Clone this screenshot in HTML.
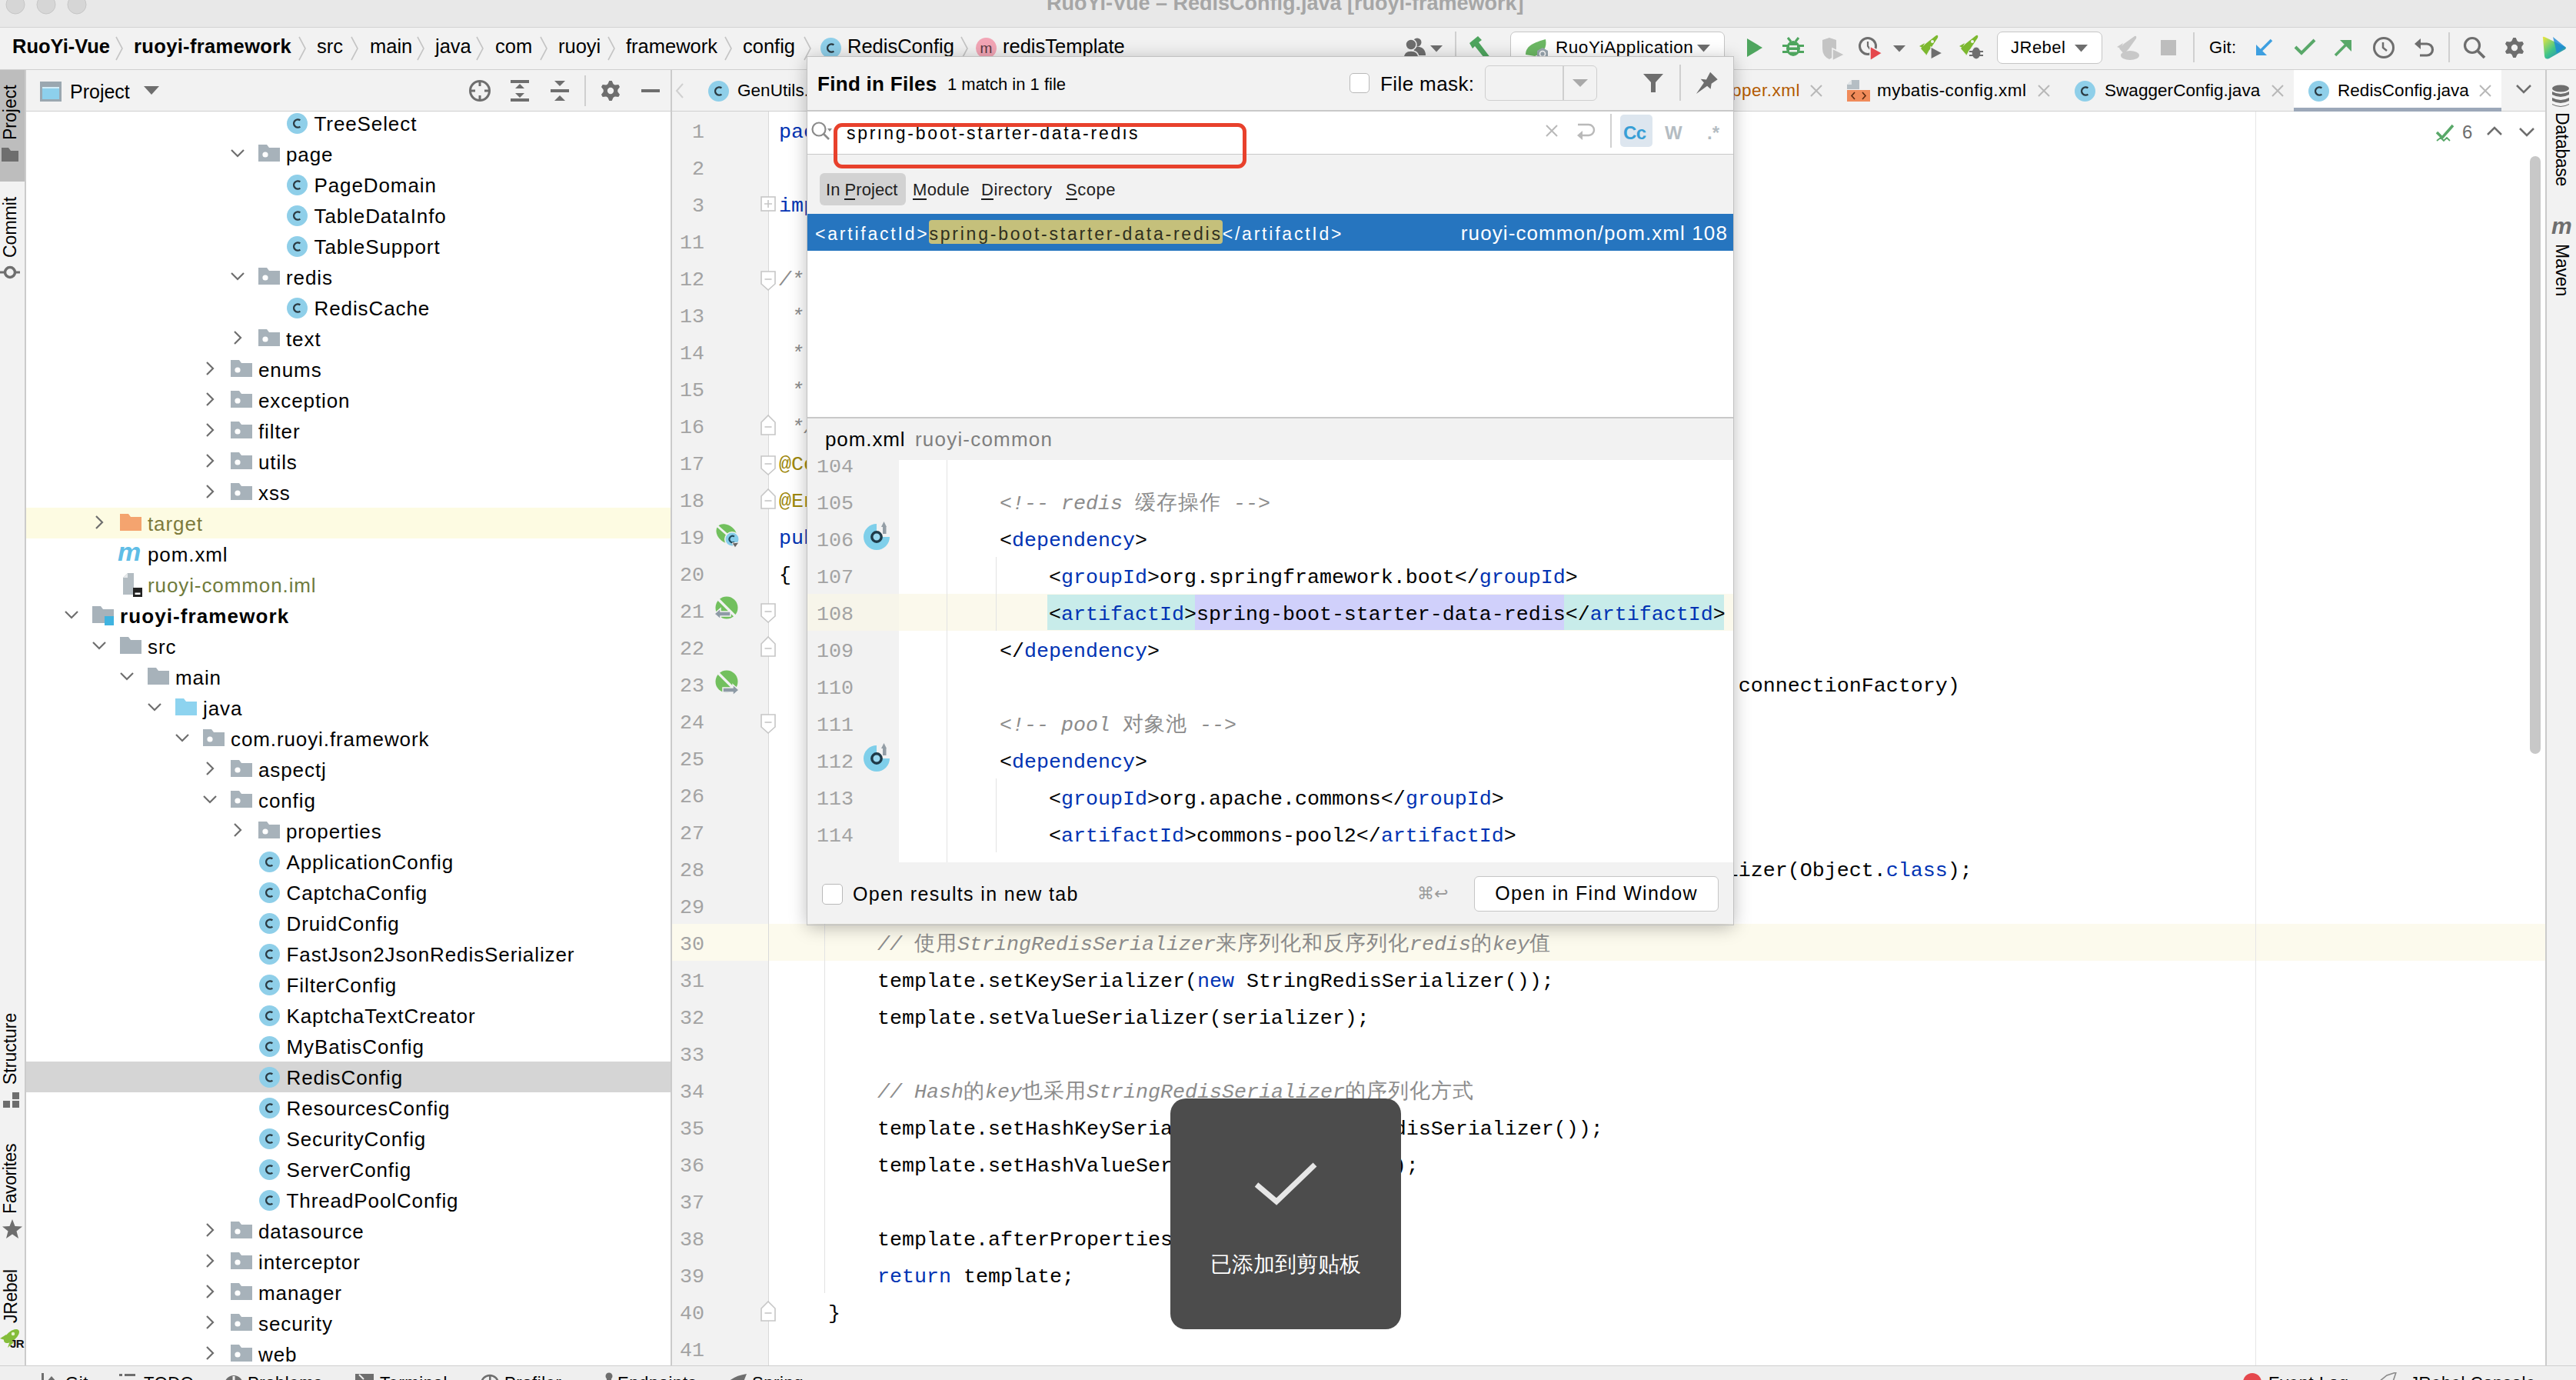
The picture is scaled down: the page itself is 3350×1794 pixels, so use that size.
<!DOCTYPE html><html><head><meta charset="utf-8"><style>html,body{margin:0;padding:0;}body{width:3350px;height:1794px;overflow:hidden;position:relative;background:#f2f2f2;font-family:'Liberation Sans',sans-serif;}</style></head><body>
<div style="position:absolute;left:0px;top:0px;width:3350px;height:35px;background:#e8e8e8;"></div>
<div style="position:absolute;left:0px;top:35px;width:3350px;height:1px;background:#d3d3d3;"></div>
<svg style="position:absolute;left:7px;top:-7px;" width="26" height="26" viewBox="0 0 26 26"><circle cx="13" cy="13" r="12" fill="#d6d6d6" stroke="#c6c6c6" stroke-width="1"/></svg>
<svg style="position:absolute;left:47px;top:-7px;" width="26" height="26" viewBox="0 0 26 26"><circle cx="13" cy="13" r="12" fill="#d6d6d6" stroke="#c6c6c6" stroke-width="1"/></svg>
<svg style="position:absolute;left:87px;top:-7px;" width="26" height="26" viewBox="0 0 26 26"><circle cx="13" cy="13" r="12" fill="#d6d6d6" stroke="#c6c6c6" stroke-width="1"/></svg>
<div style="position:absolute;left:1361.0px;top:-9.3px;font:normal bold 27px/27px 'Liberation Sans',sans-serif;color:#a6a6a6;white-space:pre;letter-spacing:0px;">RuoYi-Vue – RedisConfig.java [ruoyi-framework]</div>
<div style="position:absolute;left:0px;top:36px;width:3350px;height:54px;background:#f2f2f2;"></div>
<div style="position:absolute;left:0px;top:90px;width:3350px;height:1px;background:#d0d0d0;"></div>
<div style="position:absolute;left:16.0px;top:48.4px;font:normal bold 25.5px/25.5px 'Liberation Sans',sans-serif;color:#000;white-space:pre;letter-spacing:0px;">RuoYi-Vue</div>
<svg style="position:absolute;left:149px;top:47px;" width="12" height="32" viewBox="0 0 12 32"><path d="M2 1 L10 16 L2 31" fill="none" stroke="#c4c4c4" stroke-width="1.6"/></svg>
<div style="position:absolute;left:174.0px;top:48.4px;font:normal bold 25.5px/25.5px 'Liberation Sans',sans-serif;color:#000;white-space:pre;letter-spacing:0.35px;">ruoyi-framework</div>
<svg style="position:absolute;left:387px;top:47px;" width="12" height="32" viewBox="0 0 12 32"><path d="M2 1 L10 16 L2 31" fill="none" stroke="#c4c4c4" stroke-width="1.6"/></svg>
<div style="position:absolute;left:412.0px;top:48.4px;font:normal normal 25.5px/25.5px 'Liberation Sans',sans-serif;color:#000;white-space:pre;letter-spacing:0px;">src</div>
<svg style="position:absolute;left:454.6px;top:47px;" width="12" height="32" viewBox="0 0 12 32"><path d="M2 1 L10 16 L2 31" fill="none" stroke="#c4c4c4" stroke-width="1.6"/></svg>
<div style="position:absolute;left:481.0px;top:48.4px;font:normal normal 25.5px/25.5px 'Liberation Sans',sans-serif;color:#000;white-space:pre;letter-spacing:0px;">main</div>
<svg style="position:absolute;left:540.7px;top:47px;" width="12" height="32" viewBox="0 0 12 32"><path d="M2 1 L10 16 L2 31" fill="none" stroke="#c4c4c4" stroke-width="1.6"/></svg>
<div style="position:absolute;left:566.0px;top:48.4px;font:normal normal 25.5px/25.5px 'Liberation Sans',sans-serif;color:#000;white-space:pre;letter-spacing:0px;">java</div>
<svg style="position:absolute;left:618px;top:47px;" width="12" height="32" viewBox="0 0 12 32"><path d="M2 1 L10 16 L2 31" fill="none" stroke="#c4c4c4" stroke-width="1.6"/></svg>
<div style="position:absolute;left:644.0px;top:48.4px;font:normal normal 25.5px/25.5px 'Liberation Sans',sans-serif;color:#000;white-space:pre;letter-spacing:0px;">com</div>
<svg style="position:absolute;left:701px;top:47px;" width="12" height="32" viewBox="0 0 12 32"><path d="M2 1 L10 16 L2 31" fill="none" stroke="#c4c4c4" stroke-width="1.6"/></svg>
<div style="position:absolute;left:726.0px;top:48.4px;font:normal normal 25.5px/25.5px 'Liberation Sans',sans-serif;color:#000;white-space:pre;letter-spacing:0px;">ruoyi</div>
<svg style="position:absolute;left:789px;top:47px;" width="12" height="32" viewBox="0 0 12 32"><path d="M2 1 L10 16 L2 31" fill="none" stroke="#c4c4c4" stroke-width="1.6"/></svg>
<div style="position:absolute;left:814.0px;top:48.4px;font:normal normal 25.5px/25.5px 'Liberation Sans',sans-serif;color:#000;white-space:pre;letter-spacing:0px;">framework</div>
<svg style="position:absolute;left:941px;top:47px;" width="12" height="32" viewBox="0 0 12 32"><path d="M2 1 L10 16 L2 31" fill="none" stroke="#c4c4c4" stroke-width="1.6"/></svg>
<div style="position:absolute;left:966.0px;top:48.4px;font:normal normal 25.5px/25.5px 'Liberation Sans',sans-serif;color:#000;white-space:pre;letter-spacing:0px;">config</div>
<svg style="position:absolute;left:1044px;top:47px;" width="12" height="32" viewBox="0 0 12 32"><path d="M2 1 L10 16 L2 31" fill="none" stroke="#c4c4c4" stroke-width="1.6"/></svg>
<svg style="position:absolute;left:1065.5px;top:47.5px;" width="29.0" height="29.0" viewBox="0 0 29.0 29.0"><circle cx="14.5" cy="14.5" r="13.5" fill="#8fcfe9"/><path d="M 18.35 10.40 A 5.13 5.13 0 1 0 18.35 18.60" fill="none" stroke="#2b3a42" stroke-width="2.4" stroke-linecap="butt"/></svg>
<div style="position:absolute;left:1102.0px;top:48.4px;font:normal normal 25.5px/25.5px 'Liberation Sans',sans-serif;color:#000;white-space:pre;letter-spacing:0px;">RedisConfig</div>
<svg style="position:absolute;left:1248px;top:47px;" width="12" height="32" viewBox="0 0 12 32"><path d="M2 1 L10 16 L2 31" fill="none" stroke="#c4c4c4" stroke-width="1.6"/></svg>
<svg style="position:absolute;left:1267.5px;top:47.5px;" width="29.0" height="29.0" viewBox="0 0 29.0 29.0"><circle cx="14.5" cy="14.5" r="13.5" fill="#f2a5b5"/><text x="14.5" y="20.5" text-anchor="middle" font-family="Liberation Sans" font-size="19" fill="#5a3a44">m</text></svg>
<div style="position:absolute;left:1304.0px;top:48.4px;font:normal normal 25.5px/25.5px 'Liberation Sans',sans-serif;color:#000;white-space:pre;letter-spacing:0px;">redisTemplate</div>
<div style="position:absolute;left:0px;top:91px;width:32px;height:1684px;background:#f2f2f2;"></div>
<div style="position:absolute;left:32px;top:91px;width:2px;height:1684px;background:#cbcbcb;"></div>
<div style="position:absolute;left:0px;top:91px;width:32px;height:145px;background:#bdbdbd;"></div>
<div style="position:absolute;left:34px;top:91px;width:838px;height:54px;background:#f2f2f2;"></div>
<div style="position:absolute;left:34px;top:144px;width:838px;height:1px;background:#d0d0d0;"></div>
<div style="position:absolute;left:34px;top:145px;width:838px;height:1630px;background:#ffffff;"></div>
<div style="position:absolute;left:872px;top:91px;width:2px;height:1684px;background:#cbcbcb;"></div>
<svg style="position:absolute;left:52px;top:106px;" width="28" height="26" viewBox="0 0 28 26"><rect x="0" y="0" width="28" height="26" fill="#9aa7b0"/><rect x="3" y="7" width="22" height="16" fill="#8dd0ec"/><rect x="3" y="7" width="22" height="2" fill="#fff" opacity="0.6"/></svg>
<div style="position:absolute;left:91.0px;top:106.8px;font:normal normal 25px/25px 'Liberation Sans',sans-serif;color:#000;white-space:pre;letter-spacing:0px;">Project</div>
<svg style="position:absolute;left:187px;top:112px;" width="20" height="12" viewBox="0 0 20 12"><path d="M0 0 H20 L10 11 Z" fill="#6e6e6e"/></svg>
<svg style="position:absolute;left:608px;top:102px;" width="32" height="32" viewBox="0 0 32 32"><circle cx="16" cy="16" r="12.5" fill="none" stroke="#6e6e6e" stroke-width="3"/><rect x="14.5" y="5" width="3" height="5" fill="#6e6e6e"/><rect x="14.5" y="22" width="3" height="5" fill="#6e6e6e"/><rect x="5" y="14.5" width="5" height="3" fill="#6e6e6e"/><rect x="22" y="14.5" width="5" height="3" fill="#6e6e6e"/></svg>
<svg style="position:absolute;left:664px;top:102px;" width="25" height="32" viewBox="0 0 25 32"><rect x="0" y="2" width="24" height="4" fill="#6e6e6e"/><rect x="0" y="26" width="24" height="4" fill="#6e6e6e"/><path d="M6 13 L12 7 L18 13 Z" fill="#6e6e6e"/><path d="M6 19 L12 25 L18 19 Z" fill="#6e6e6e"/></svg>
<svg style="position:absolute;left:716px;top:102px;" width="25" height="32" viewBox="0 0 25 32"><rect x="0" y="14" width="24" height="4" fill="#6e6e6e"/><path d="M5 3 L12 10 L19 3 Z" fill="#6e6e6e"/><path d="M5 29 L12 22 L19 29 Z" fill="#6e6e6e"/></svg>
<div style="position:absolute;left:760px;top:98px;width:2px;height:40px;background:#cfcfcf;"></div>
<svg style="position:absolute;left:780px;top:104px;" width="28" height="28" viewBox="0 0 28 28"><polygon points="12.30,1.11 15.70,1.11 17.58,5.35 19.70,6.57 24.31,6.09 26.01,9.03 23.28,12.78 23.28,15.22 26.01,18.97 24.31,21.91 19.70,21.43 17.58,22.65 15.70,26.89 12.30,26.89 10.42,22.65 8.30,21.43 3.69,21.91 1.99,18.97 4.72,15.22 4.72,12.78 1.99,9.03 3.69,6.09 8.30,6.57 10.42,5.35" fill="#6e6e6e"/><circle cx="14" cy="14" r="8.06" fill="#6e6e6e"/><circle cx="14" cy="14" r="4.16" fill="#f2f2f2"/></svg>
<div style="position:absolute;left:834px;top:116px;width:24px;height:4px;background:#6e6e6e;"></div>
<div style="position:absolute;left:34px;top:145px;width:838px;height:1630px;overflow:hidden;"><div style="position:absolute;left:-34px;top:-145px;width:3350px;height:1794px;">
<svg style="position:absolute;left:371.5px;top:145.5px;" width="29.0" height="29.0" viewBox="0 0 29.0 29.0"><circle cx="14.5" cy="14.5" r="13.5" fill="#8fcfe9"/><path d="M 18.35 10.40 A 5.13 5.13 0 1 0 18.35 18.60" fill="none" stroke="#2b3a42" stroke-width="2.4" stroke-linecap="butt"/></svg>
<div style="position:absolute;left:408.5px;top:148.0px;font:normal normal 26px/26px 'Liberation Sans',sans-serif;color:#000;white-space:pre;letter-spacing:0.9px;">TreeSelect</div>
<svg style="position:absolute;left:299px;top:191px;" width="20" height="16" viewBox="0 0 20 16"><path d="M2 4 L10 12 L18 4" fill="none" stroke="#6e6e6e" stroke-width="2.2"/></svg>
<svg style="position:absolute;left:336px;top:188px;" width="30" height="26" viewBox="0 0 30 26"><path d="M0 0 H11 L14 4 H28 V22 H0 Z" fill="#a7b2ba"/><circle cx="9" cy="13" r="3.6" fill="#fff"/></svg>
<div style="position:absolute;left:372.0px;top:188.0px;font:normal normal 26px/26px 'Liberation Sans',sans-serif;color:#000;white-space:pre;letter-spacing:0.9px;">page</div>
<svg style="position:absolute;left:371.5px;top:225.5px;" width="29.0" height="29.0" viewBox="0 0 29.0 29.0"><circle cx="14.5" cy="14.5" r="13.5" fill="#8fcfe9"/><path d="M 18.35 10.40 A 5.13 5.13 0 1 0 18.35 18.60" fill="none" stroke="#2b3a42" stroke-width="2.4" stroke-linecap="butt"/></svg>
<div style="position:absolute;left:408.5px;top:228.0px;font:normal normal 26px/26px 'Liberation Sans',sans-serif;color:#000;white-space:pre;letter-spacing:0.9px;">PageDomain</div>
<svg style="position:absolute;left:371.5px;top:265.5px;" width="29.0" height="29.0" viewBox="0 0 29.0 29.0"><circle cx="14.5" cy="14.5" r="13.5" fill="#8fcfe9"/><path d="M 18.35 10.40 A 5.13 5.13 0 1 0 18.35 18.60" fill="none" stroke="#2b3a42" stroke-width="2.4" stroke-linecap="butt"/></svg>
<div style="position:absolute;left:408.5px;top:268.0px;font:normal normal 26px/26px 'Liberation Sans',sans-serif;color:#000;white-space:pre;letter-spacing:0.9px;">TableDataInfo</div>
<svg style="position:absolute;left:371.5px;top:305.5px;" width="29.0" height="29.0" viewBox="0 0 29.0 29.0"><circle cx="14.5" cy="14.5" r="13.5" fill="#8fcfe9"/><path d="M 18.35 10.40 A 5.13 5.13 0 1 0 18.35 18.60" fill="none" stroke="#2b3a42" stroke-width="2.4" stroke-linecap="butt"/></svg>
<div style="position:absolute;left:408.5px;top:308.0px;font:normal normal 26px/26px 'Liberation Sans',sans-serif;color:#000;white-space:pre;letter-spacing:0.9px;">TableSupport</div>
<svg style="position:absolute;left:299px;top:351px;" width="20" height="16" viewBox="0 0 20 16"><path d="M2 4 L10 12 L18 4" fill="none" stroke="#6e6e6e" stroke-width="2.2"/></svg>
<svg style="position:absolute;left:336px;top:348px;" width="30" height="26" viewBox="0 0 30 26"><path d="M0 0 H11 L14 4 H28 V22 H0 Z" fill="#a7b2ba"/><circle cx="9" cy="13" r="3.6" fill="#fff"/></svg>
<div style="position:absolute;left:372.0px;top:348.0px;font:normal normal 26px/26px 'Liberation Sans',sans-serif;color:#000;white-space:pre;letter-spacing:0.9px;">redis</div>
<svg style="position:absolute;left:371.5px;top:385.5px;" width="29.0" height="29.0" viewBox="0 0 29.0 29.0"><circle cx="14.5" cy="14.5" r="13.5" fill="#8fcfe9"/><path d="M 18.35 10.40 A 5.13 5.13 0 1 0 18.35 18.60" fill="none" stroke="#2b3a42" stroke-width="2.4" stroke-linecap="butt"/></svg>
<div style="position:absolute;left:408.5px;top:388.0px;font:normal normal 26px/26px 'Liberation Sans',sans-serif;color:#000;white-space:pre;letter-spacing:0.9px;">RedisCache</div>
<svg style="position:absolute;left:301px;top:429px;" width="16" height="20" viewBox="0 0 16 20"><path d="M4 2 L12 10 L4 18" fill="none" stroke="#6e6e6e" stroke-width="2.2"/></svg>
<svg style="position:absolute;left:336px;top:428px;" width="30" height="26" viewBox="0 0 30 26"><path d="M0 0 H11 L14 4 H28 V22 H0 Z" fill="#a7b2ba"/><circle cx="9" cy="13" r="3.6" fill="#fff"/></svg>
<div style="position:absolute;left:372.0px;top:428.0px;font:normal normal 26px/26px 'Liberation Sans',sans-serif;color:#000;white-space:pre;letter-spacing:0.9px;">text</div>
<svg style="position:absolute;left:265px;top:469px;" width="16" height="20" viewBox="0 0 16 20"><path d="M4 2 L12 10 L4 18" fill="none" stroke="#6e6e6e" stroke-width="2.2"/></svg>
<svg style="position:absolute;left:300px;top:468px;" width="30" height="26" viewBox="0 0 30 26"><path d="M0 0 H11 L14 4 H28 V22 H0 Z" fill="#a7b2ba"/><circle cx="9" cy="13" r="3.6" fill="#fff"/></svg>
<div style="position:absolute;left:336.0px;top:468.0px;font:normal normal 26px/26px 'Liberation Sans',sans-serif;color:#000;white-space:pre;letter-spacing:0.9px;">enums</div>
<svg style="position:absolute;left:265px;top:509px;" width="16" height="20" viewBox="0 0 16 20"><path d="M4 2 L12 10 L4 18" fill="none" stroke="#6e6e6e" stroke-width="2.2"/></svg>
<svg style="position:absolute;left:300px;top:508px;" width="30" height="26" viewBox="0 0 30 26"><path d="M0 0 H11 L14 4 H28 V22 H0 Z" fill="#a7b2ba"/><circle cx="9" cy="13" r="3.6" fill="#fff"/></svg>
<div style="position:absolute;left:336.0px;top:508.0px;font:normal normal 26px/26px 'Liberation Sans',sans-serif;color:#000;white-space:pre;letter-spacing:0.9px;">exception</div>
<svg style="position:absolute;left:265px;top:549px;" width="16" height="20" viewBox="0 0 16 20"><path d="M4 2 L12 10 L4 18" fill="none" stroke="#6e6e6e" stroke-width="2.2"/></svg>
<svg style="position:absolute;left:300px;top:548px;" width="30" height="26" viewBox="0 0 30 26"><path d="M0 0 H11 L14 4 H28 V22 H0 Z" fill="#a7b2ba"/><circle cx="9" cy="13" r="3.6" fill="#fff"/></svg>
<div style="position:absolute;left:336.0px;top:548.0px;font:normal normal 26px/26px 'Liberation Sans',sans-serif;color:#000;white-space:pre;letter-spacing:0.9px;">filter</div>
<svg style="position:absolute;left:265px;top:589px;" width="16" height="20" viewBox="0 0 16 20"><path d="M4 2 L12 10 L4 18" fill="none" stroke="#6e6e6e" stroke-width="2.2"/></svg>
<svg style="position:absolute;left:300px;top:588px;" width="30" height="26" viewBox="0 0 30 26"><path d="M0 0 H11 L14 4 H28 V22 H0 Z" fill="#a7b2ba"/><circle cx="9" cy="13" r="3.6" fill="#fff"/></svg>
<div style="position:absolute;left:336.0px;top:588.0px;font:normal normal 26px/26px 'Liberation Sans',sans-serif;color:#000;white-space:pre;letter-spacing:0.9px;">utils</div>
<svg style="position:absolute;left:265px;top:629px;" width="16" height="20" viewBox="0 0 16 20"><path d="M4 2 L12 10 L4 18" fill="none" stroke="#6e6e6e" stroke-width="2.2"/></svg>
<svg style="position:absolute;left:300px;top:628px;" width="30" height="26" viewBox="0 0 30 26"><path d="M0 0 H11 L14 4 H28 V22 H0 Z" fill="#a7b2ba"/><circle cx="9" cy="13" r="3.6" fill="#fff"/></svg>
<div style="position:absolute;left:336.0px;top:628.0px;font:normal normal 26px/26px 'Liberation Sans',sans-serif;color:#000;white-space:pre;letter-spacing:0.9px;">xss</div>
<div style="position:absolute;left:34px;top:660px;width:838px;height:40px;background:#fdfbe2;"></div>
<svg style="position:absolute;left:121px;top:669px;" width="16" height="20" viewBox="0 0 16 20"><path d="M4 2 L12 10 L4 18" fill="none" stroke="#6e6e6e" stroke-width="2.2"/></svg>
<svg style="position:absolute;left:156px;top:668px;" width="30" height="26" viewBox="0 0 30 26"><path d="M0 0 H11 L14 4 H28 V22 H0 Z" fill="#f4a46f"/></svg>
<div style="position:absolute;left:192.0px;top:668.0px;font:normal normal 26px/26px 'Liberation Sans',sans-serif;color:#7d7a3c;white-space:pre;letter-spacing:0.9px;">target</div>
<div style="position:absolute;left:153.0px;top:700.2px;font:italic bold 34px/34px 'Liberation Sans',sans-serif;color:#5fbde6;white-space:pre;letter-spacing:-1px;">m</div>
<div style="position:absolute;left:192.0px;top:708.0px;font:normal normal 26px/26px 'Liberation Sans',sans-serif;color:#000;white-space:pre;letter-spacing:0.9px;">pom.xml</div>
<svg style="position:absolute;left:160px;top:745px;" width="26" height="32" viewBox="0 0 26 32"><path d="M0 6 L6 0 H14 V28 H0 Z" fill="#b3bcc2"/><path d="M0 6 H6 V0 Z" fill="#e6e9eb"/><rect x="13" y="19" width="12" height="12" fill="#222"/><rect x="15.5" y="25.5" width="7" height="2.5" fill="#fff"/></svg>
<div style="position:absolute;left:192.0px;top:748.0px;font:normal normal 26px/26px 'Liberation Sans',sans-serif;color:#6f7b3c;white-space:pre;letter-spacing:0.9px;">ruoyi-common.iml</div>
<svg style="position:absolute;left:83px;top:791px;" width="20" height="16" viewBox="0 0 20 16"><path d="M2 4 L10 12 L18 4" fill="none" stroke="#6e6e6e" stroke-width="2.2"/></svg>
<svg style="position:absolute;left:120px;top:788px;" width="30" height="26" viewBox="0 0 30 26"><path d="M0 0 H11 L14 4 H28 V22 H0 Z" fill="#a7b2ba"/><rect x="16" y="13" width="12" height="12" fill="#3fb3e0"/></svg>
<div style="position:absolute;left:156.0px;top:788.0px;font:normal bold 26px/26px 'Liberation Sans',sans-serif;color:#000;white-space:pre;letter-spacing:1.1px;">ruoyi-framework</div>
<svg style="position:absolute;left:119px;top:831px;" width="20" height="16" viewBox="0 0 20 16"><path d="M2 4 L10 12 L18 4" fill="none" stroke="#6e6e6e" stroke-width="2.2"/></svg>
<svg style="position:absolute;left:156px;top:828px;" width="30" height="26" viewBox="0 0 30 26"><path d="M0 0 H11 L14 4 H28 V22 H0 Z" fill="#a7b2ba"/></svg>
<div style="position:absolute;left:192.0px;top:828.0px;font:normal normal 26px/26px 'Liberation Sans',sans-serif;color:#000;white-space:pre;letter-spacing:0.9px;">src</div>
<svg style="position:absolute;left:155px;top:871px;" width="20" height="16" viewBox="0 0 20 16"><path d="M2 4 L10 12 L18 4" fill="none" stroke="#6e6e6e" stroke-width="2.2"/></svg>
<svg style="position:absolute;left:192px;top:868px;" width="30" height="26" viewBox="0 0 30 26"><path d="M0 0 H11 L14 4 H28 V22 H0 Z" fill="#a7b2ba"/></svg>
<div style="position:absolute;left:228.0px;top:868.0px;font:normal normal 26px/26px 'Liberation Sans',sans-serif;color:#000;white-space:pre;letter-spacing:0.9px;">main</div>
<svg style="position:absolute;left:191px;top:911px;" width="20" height="16" viewBox="0 0 20 16"><path d="M2 4 L10 12 L18 4" fill="none" stroke="#6e6e6e" stroke-width="2.2"/></svg>
<svg style="position:absolute;left:228px;top:908px;" width="30" height="26" viewBox="0 0 30 26"><path d="M0 0 H11 L14 4 H28 V22 H0 Z" fill="#8dd3ef"/></svg>
<div style="position:absolute;left:264.0px;top:908.0px;font:normal normal 26px/26px 'Liberation Sans',sans-serif;color:#000;white-space:pre;letter-spacing:0.9px;">java</div>
<svg style="position:absolute;left:227px;top:951px;" width="20" height="16" viewBox="0 0 20 16"><path d="M2 4 L10 12 L18 4" fill="none" stroke="#6e6e6e" stroke-width="2.2"/></svg>
<svg style="position:absolute;left:264px;top:948px;" width="30" height="26" viewBox="0 0 30 26"><path d="M0 0 H11 L14 4 H28 V22 H0 Z" fill="#a7b2ba"/><circle cx="9" cy="13" r="3.6" fill="#fff"/></svg>
<div style="position:absolute;left:300.0px;top:948.0px;font:normal normal 26px/26px 'Liberation Sans',sans-serif;color:#000;white-space:pre;letter-spacing:0.9px;">com.ruoyi.framework</div>
<svg style="position:absolute;left:265px;top:989px;" width="16" height="20" viewBox="0 0 16 20"><path d="M4 2 L12 10 L4 18" fill="none" stroke="#6e6e6e" stroke-width="2.2"/></svg>
<svg style="position:absolute;left:300px;top:988px;" width="30" height="26" viewBox="0 0 30 26"><path d="M0 0 H11 L14 4 H28 V22 H0 Z" fill="#a7b2ba"/><circle cx="9" cy="13" r="3.6" fill="#fff"/></svg>
<div style="position:absolute;left:336.0px;top:988.0px;font:normal normal 26px/26px 'Liberation Sans',sans-serif;color:#000;white-space:pre;letter-spacing:0.9px;">aspectj</div>
<svg style="position:absolute;left:263px;top:1031px;" width="20" height="16" viewBox="0 0 20 16"><path d="M2 4 L10 12 L18 4" fill="none" stroke="#6e6e6e" stroke-width="2.2"/></svg>
<svg style="position:absolute;left:300px;top:1028px;" width="30" height="26" viewBox="0 0 30 26"><path d="M0 0 H11 L14 4 H28 V22 H0 Z" fill="#a7b2ba"/><circle cx="9" cy="13" r="3.6" fill="#fff"/></svg>
<div style="position:absolute;left:336.0px;top:1028.0px;font:normal normal 26px/26px 'Liberation Sans',sans-serif;color:#000;white-space:pre;letter-spacing:0.9px;">config</div>
<svg style="position:absolute;left:301px;top:1069px;" width="16" height="20" viewBox="0 0 16 20"><path d="M4 2 L12 10 L4 18" fill="none" stroke="#6e6e6e" stroke-width="2.2"/></svg>
<svg style="position:absolute;left:336px;top:1068px;" width="30" height="26" viewBox="0 0 30 26"><path d="M0 0 H11 L14 4 H28 V22 H0 Z" fill="#a7b2ba"/><circle cx="9" cy="13" r="3.6" fill="#fff"/></svg>
<div style="position:absolute;left:372.0px;top:1068.0px;font:normal normal 26px/26px 'Liberation Sans',sans-serif;color:#000;white-space:pre;letter-spacing:0.9px;">properties</div>
<svg style="position:absolute;left:335.5px;top:1105.5px;" width="29.0" height="29.0" viewBox="0 0 29.0 29.0"><circle cx="14.5" cy="14.5" r="13.5" fill="#8fcfe9"/><path d="M 18.35 10.40 A 5.13 5.13 0 1 0 18.35 18.60" fill="none" stroke="#2b3a42" stroke-width="2.4" stroke-linecap="butt"/></svg>
<div style="position:absolute;left:372.5px;top:1108.0px;font:normal normal 26px/26px 'Liberation Sans',sans-serif;color:#000;white-space:pre;letter-spacing:0.9px;">ApplicationConfig</div>
<svg style="position:absolute;left:335.5px;top:1145.5px;" width="29.0" height="29.0" viewBox="0 0 29.0 29.0"><circle cx="14.5" cy="14.5" r="13.5" fill="#8fcfe9"/><path d="M 18.35 10.40 A 5.13 5.13 0 1 0 18.35 18.60" fill="none" stroke="#2b3a42" stroke-width="2.4" stroke-linecap="butt"/></svg>
<div style="position:absolute;left:372.5px;top:1148.0px;font:normal normal 26px/26px 'Liberation Sans',sans-serif;color:#000;white-space:pre;letter-spacing:0.9px;">CaptchaConfig</div>
<svg style="position:absolute;left:335.5px;top:1185.5px;" width="29.0" height="29.0" viewBox="0 0 29.0 29.0"><circle cx="14.5" cy="14.5" r="13.5" fill="#8fcfe9"/><path d="M 18.35 10.40 A 5.13 5.13 0 1 0 18.35 18.60" fill="none" stroke="#2b3a42" stroke-width="2.4" stroke-linecap="butt"/></svg>
<div style="position:absolute;left:372.5px;top:1188.0px;font:normal normal 26px/26px 'Liberation Sans',sans-serif;color:#000;white-space:pre;letter-spacing:0.9px;">DruidConfig</div>
<svg style="position:absolute;left:335.5px;top:1225.5px;" width="29.0" height="29.0" viewBox="0 0 29.0 29.0"><circle cx="14.5" cy="14.5" r="13.5" fill="#8fcfe9"/><path d="M 18.35 10.40 A 5.13 5.13 0 1 0 18.35 18.60" fill="none" stroke="#2b3a42" stroke-width="2.4" stroke-linecap="butt"/></svg>
<div style="position:absolute;left:372.5px;top:1228.0px;font:normal normal 26px/26px 'Liberation Sans',sans-serif;color:#000;white-space:pre;letter-spacing:0.9px;">FastJson2JsonRedisSerializer</div>
<svg style="position:absolute;left:335.5px;top:1265.5px;" width="29.0" height="29.0" viewBox="0 0 29.0 29.0"><circle cx="14.5" cy="14.5" r="13.5" fill="#8fcfe9"/><path d="M 18.35 10.40 A 5.13 5.13 0 1 0 18.35 18.60" fill="none" stroke="#2b3a42" stroke-width="2.4" stroke-linecap="butt"/></svg>
<div style="position:absolute;left:372.5px;top:1268.0px;font:normal normal 26px/26px 'Liberation Sans',sans-serif;color:#000;white-space:pre;letter-spacing:0.9px;">FilterConfig</div>
<svg style="position:absolute;left:335.5px;top:1305.5px;" width="29.0" height="29.0" viewBox="0 0 29.0 29.0"><circle cx="14.5" cy="14.5" r="13.5" fill="#8fcfe9"/><path d="M 18.35 10.40 A 5.13 5.13 0 1 0 18.35 18.60" fill="none" stroke="#2b3a42" stroke-width="2.4" stroke-linecap="butt"/></svg>
<div style="position:absolute;left:372.5px;top:1308.0px;font:normal normal 26px/26px 'Liberation Sans',sans-serif;color:#000;white-space:pre;letter-spacing:0.9px;">KaptchaTextCreator</div>
<svg style="position:absolute;left:335.5px;top:1345.5px;" width="29.0" height="29.0" viewBox="0 0 29.0 29.0"><circle cx="14.5" cy="14.5" r="13.5" fill="#8fcfe9"/><path d="M 18.35 10.40 A 5.13 5.13 0 1 0 18.35 18.60" fill="none" stroke="#2b3a42" stroke-width="2.4" stroke-linecap="butt"/></svg>
<div style="position:absolute;left:372.5px;top:1348.0px;font:normal normal 26px/26px 'Liberation Sans',sans-serif;color:#000;white-space:pre;letter-spacing:0.9px;">MyBatisConfig</div>
<div style="position:absolute;left:34px;top:1380px;width:838px;height:40px;background:#d5d5d5;"></div>
<svg style="position:absolute;left:335.5px;top:1385.5px;" width="29.0" height="29.0" viewBox="0 0 29.0 29.0"><circle cx="14.5" cy="14.5" r="13.5" fill="#8fcfe9"/><path d="M 18.35 10.40 A 5.13 5.13 0 1 0 18.35 18.60" fill="none" stroke="#2b3a42" stroke-width="2.4" stroke-linecap="butt"/></svg>
<div style="position:absolute;left:372.5px;top:1388.0px;font:normal normal 26px/26px 'Liberation Sans',sans-serif;color:#000;white-space:pre;letter-spacing:0.9px;">RedisConfig</div>
<svg style="position:absolute;left:335.5px;top:1425.5px;" width="29.0" height="29.0" viewBox="0 0 29.0 29.0"><circle cx="14.5" cy="14.5" r="13.5" fill="#8fcfe9"/><path d="M 18.35 10.40 A 5.13 5.13 0 1 0 18.35 18.60" fill="none" stroke="#2b3a42" stroke-width="2.4" stroke-linecap="butt"/></svg>
<div style="position:absolute;left:372.5px;top:1428.0px;font:normal normal 26px/26px 'Liberation Sans',sans-serif;color:#000;white-space:pre;letter-spacing:0.9px;">ResourcesConfig</div>
<svg style="position:absolute;left:335.5px;top:1465.5px;" width="29.0" height="29.0" viewBox="0 0 29.0 29.0"><circle cx="14.5" cy="14.5" r="13.5" fill="#8fcfe9"/><path d="M 18.35 10.40 A 5.13 5.13 0 1 0 18.35 18.60" fill="none" stroke="#2b3a42" stroke-width="2.4" stroke-linecap="butt"/></svg>
<div style="position:absolute;left:372.5px;top:1468.0px;font:normal normal 26px/26px 'Liberation Sans',sans-serif;color:#000;white-space:pre;letter-spacing:0.9px;">SecurityConfig</div>
<svg style="position:absolute;left:335.5px;top:1505.5px;" width="29.0" height="29.0" viewBox="0 0 29.0 29.0"><circle cx="14.5" cy="14.5" r="13.5" fill="#8fcfe9"/><path d="M 18.35 10.40 A 5.13 5.13 0 1 0 18.35 18.60" fill="none" stroke="#2b3a42" stroke-width="2.4" stroke-linecap="butt"/></svg>
<div style="position:absolute;left:372.5px;top:1508.0px;font:normal normal 26px/26px 'Liberation Sans',sans-serif;color:#000;white-space:pre;letter-spacing:0.9px;">ServerConfig</div>
<svg style="position:absolute;left:335.5px;top:1545.5px;" width="29.0" height="29.0" viewBox="0 0 29.0 29.0"><circle cx="14.5" cy="14.5" r="13.5" fill="#8fcfe9"/><path d="M 18.35 10.40 A 5.13 5.13 0 1 0 18.35 18.60" fill="none" stroke="#2b3a42" stroke-width="2.4" stroke-linecap="butt"/></svg>
<div style="position:absolute;left:372.5px;top:1548.0px;font:normal normal 26px/26px 'Liberation Sans',sans-serif;color:#000;white-space:pre;letter-spacing:0.9px;">ThreadPoolConfig</div>
<svg style="position:absolute;left:265px;top:1589px;" width="16" height="20" viewBox="0 0 16 20"><path d="M4 2 L12 10 L4 18" fill="none" stroke="#6e6e6e" stroke-width="2.2"/></svg>
<svg style="position:absolute;left:300px;top:1588px;" width="30" height="26" viewBox="0 0 30 26"><path d="M0 0 H11 L14 4 H28 V22 H0 Z" fill="#a7b2ba"/><circle cx="9" cy="13" r="3.6" fill="#fff"/></svg>
<div style="position:absolute;left:336.0px;top:1588.0px;font:normal normal 26px/26px 'Liberation Sans',sans-serif;color:#000;white-space:pre;letter-spacing:0.9px;">datasource</div>
<svg style="position:absolute;left:265px;top:1629px;" width="16" height="20" viewBox="0 0 16 20"><path d="M4 2 L12 10 L4 18" fill="none" stroke="#6e6e6e" stroke-width="2.2"/></svg>
<svg style="position:absolute;left:300px;top:1628px;" width="30" height="26" viewBox="0 0 30 26"><path d="M0 0 H11 L14 4 H28 V22 H0 Z" fill="#a7b2ba"/><circle cx="9" cy="13" r="3.6" fill="#fff"/></svg>
<div style="position:absolute;left:336.0px;top:1628.0px;font:normal normal 26px/26px 'Liberation Sans',sans-serif;color:#000;white-space:pre;letter-spacing:0.9px;">interceptor</div>
<svg style="position:absolute;left:265px;top:1669px;" width="16" height="20" viewBox="0 0 16 20"><path d="M4 2 L12 10 L4 18" fill="none" stroke="#6e6e6e" stroke-width="2.2"/></svg>
<svg style="position:absolute;left:300px;top:1668px;" width="30" height="26" viewBox="0 0 30 26"><path d="M0 0 H11 L14 4 H28 V22 H0 Z" fill="#a7b2ba"/><circle cx="9" cy="13" r="3.6" fill="#fff"/></svg>
<div style="position:absolute;left:336.0px;top:1668.0px;font:normal normal 26px/26px 'Liberation Sans',sans-serif;color:#000;white-space:pre;letter-spacing:0.9px;">manager</div>
<svg style="position:absolute;left:265px;top:1709px;" width="16" height="20" viewBox="0 0 16 20"><path d="M4 2 L12 10 L4 18" fill="none" stroke="#6e6e6e" stroke-width="2.2"/></svg>
<svg style="position:absolute;left:300px;top:1708px;" width="30" height="26" viewBox="0 0 30 26"><path d="M0 0 H11 L14 4 H28 V22 H0 Z" fill="#a7b2ba"/><circle cx="9" cy="13" r="3.6" fill="#fff"/></svg>
<div style="position:absolute;left:336.0px;top:1708.0px;font:normal normal 26px/26px 'Liberation Sans',sans-serif;color:#000;white-space:pre;letter-spacing:0.9px;">security</div>
<svg style="position:absolute;left:265px;top:1749px;" width="16" height="20" viewBox="0 0 16 20"><path d="M4 2 L12 10 L4 18" fill="none" stroke="#6e6e6e" stroke-width="2.2"/></svg>
<svg style="position:absolute;left:300px;top:1748px;" width="30" height="26" viewBox="0 0 30 26"><path d="M0 0 H11 L14 4 H28 V22 H0 Z" fill="#a7b2ba"/><circle cx="9" cy="13" r="3.6" fill="#fff"/></svg>
<div style="position:absolute;left:336.0px;top:1748.0px;font:normal normal 26px/26px 'Liberation Sans',sans-serif;color:#000;white-space:pre;letter-spacing:0.9px;">web</div>
</div></div>
<div style="position:absolute;left:874px;top:91px;width:2436px;height:54px;background:#f2f2f2;"></div>
<div style="position:absolute;left:874px;top:144px;width:2436px;height:1px;background:#d0d0d0;"></div>
<div style="position:absolute;left:874px;top:145px;width:125px;height:1630px;background:#f2f2f2;"></div>
<div style="position:absolute;left:999px;top:145px;width:2311px;height:1630px;background:#ffffff;"></div>
<div style="position:absolute;left:999px;top:145px;width:1px;height:1630px;background:#d6d6d6;"></div>
<div style="position:absolute;left:874px;top:1201px;width:2436px;height:48px;background:#fcfaed;"></div>
<div style="position:absolute;left:2933px;top:145px;width:1px;height:1630px;background:#e6e6e6;"></div>
<div style="position:absolute;left:999px;top:145px;width:1px;height:1630px;background:#d9d9d9;"></div>
<div style="position:absolute;left:840px;width:76px;top:158.9px;font:26.67px/26.67px 'Liberation Mono',monospace;color:#a3a3a3;text-align:right;white-space:pre;">1</div>
<div style="position:absolute;left:840px;width:76px;top:206.9px;font:26.67px/26.67px 'Liberation Mono',monospace;color:#a3a3a3;text-align:right;white-space:pre;">2</div>
<div style="position:absolute;left:840px;width:76px;top:254.9px;font:26.67px/26.67px 'Liberation Mono',monospace;color:#a3a3a3;text-align:right;white-space:pre;">3</div>
<div style="position:absolute;left:840px;width:76px;top:302.9px;font:26.67px/26.67px 'Liberation Mono',monospace;color:#a3a3a3;text-align:right;white-space:pre;">11</div>
<div style="position:absolute;left:840px;width:76px;top:350.9px;font:26.67px/26.67px 'Liberation Mono',monospace;color:#a3a3a3;text-align:right;white-space:pre;">12</div>
<div style="position:absolute;left:840px;width:76px;top:398.9px;font:26.67px/26.67px 'Liberation Mono',monospace;color:#a3a3a3;text-align:right;white-space:pre;">13</div>
<div style="position:absolute;left:840px;width:76px;top:446.9px;font:26.67px/26.67px 'Liberation Mono',monospace;color:#a3a3a3;text-align:right;white-space:pre;">14</div>
<div style="position:absolute;left:840px;width:76px;top:494.9px;font:26.67px/26.67px 'Liberation Mono',monospace;color:#a3a3a3;text-align:right;white-space:pre;">15</div>
<div style="position:absolute;left:840px;width:76px;top:542.9px;font:26.67px/26.67px 'Liberation Mono',monospace;color:#a3a3a3;text-align:right;white-space:pre;">16</div>
<div style="position:absolute;left:840px;width:76px;top:590.9px;font:26.67px/26.67px 'Liberation Mono',monospace;color:#a3a3a3;text-align:right;white-space:pre;">17</div>
<div style="position:absolute;left:840px;width:76px;top:638.9px;font:26.67px/26.67px 'Liberation Mono',monospace;color:#a3a3a3;text-align:right;white-space:pre;">18</div>
<div style="position:absolute;left:840px;width:76px;top:686.9px;font:26.67px/26.67px 'Liberation Mono',monospace;color:#a3a3a3;text-align:right;white-space:pre;">19</div>
<div style="position:absolute;left:840px;width:76px;top:734.9px;font:26.67px/26.67px 'Liberation Mono',monospace;color:#a3a3a3;text-align:right;white-space:pre;">20</div>
<div style="position:absolute;left:840px;width:76px;top:782.9px;font:26.67px/26.67px 'Liberation Mono',monospace;color:#a3a3a3;text-align:right;white-space:pre;">21</div>
<div style="position:absolute;left:840px;width:76px;top:830.9px;font:26.67px/26.67px 'Liberation Mono',monospace;color:#a3a3a3;text-align:right;white-space:pre;">22</div>
<div style="position:absolute;left:840px;width:76px;top:878.9px;font:26.67px/26.67px 'Liberation Mono',monospace;color:#a3a3a3;text-align:right;white-space:pre;">23</div>
<div style="position:absolute;left:840px;width:76px;top:926.9px;font:26.67px/26.67px 'Liberation Mono',monospace;color:#a3a3a3;text-align:right;white-space:pre;">24</div>
<div style="position:absolute;left:840px;width:76px;top:974.9px;font:26.67px/26.67px 'Liberation Mono',monospace;color:#a3a3a3;text-align:right;white-space:pre;">25</div>
<div style="position:absolute;left:840px;width:76px;top:1022.9px;font:26.67px/26.67px 'Liberation Mono',monospace;color:#a3a3a3;text-align:right;white-space:pre;">26</div>
<div style="position:absolute;left:840px;width:76px;top:1070.9px;font:26.67px/26.67px 'Liberation Mono',monospace;color:#a3a3a3;text-align:right;white-space:pre;">27</div>
<div style="position:absolute;left:840px;width:76px;top:1118.9px;font:26.67px/26.67px 'Liberation Mono',monospace;color:#a3a3a3;text-align:right;white-space:pre;">28</div>
<div style="position:absolute;left:840px;width:76px;top:1166.9px;font:26.67px/26.67px 'Liberation Mono',monospace;color:#a3a3a3;text-align:right;white-space:pre;">29</div>
<div style="position:absolute;left:840px;width:76px;top:1214.9px;font:26.67px/26.67px 'Liberation Mono',monospace;color:#a3a3a3;text-align:right;white-space:pre;">30</div>
<div style="position:absolute;left:840px;width:76px;top:1262.9px;font:26.67px/26.67px 'Liberation Mono',monospace;color:#a3a3a3;text-align:right;white-space:pre;">31</div>
<div style="position:absolute;left:840px;width:76px;top:1310.9px;font:26.67px/26.67px 'Liberation Mono',monospace;color:#a3a3a3;text-align:right;white-space:pre;">32</div>
<div style="position:absolute;left:840px;width:76px;top:1358.9px;font:26.67px/26.67px 'Liberation Mono',monospace;color:#a3a3a3;text-align:right;white-space:pre;">33</div>
<div style="position:absolute;left:840px;width:76px;top:1406.9px;font:26.67px/26.67px 'Liberation Mono',monospace;color:#a3a3a3;text-align:right;white-space:pre;">34</div>
<div style="position:absolute;left:840px;width:76px;top:1454.9px;font:26.67px/26.67px 'Liberation Mono',monospace;color:#a3a3a3;text-align:right;white-space:pre;">35</div>
<div style="position:absolute;left:840px;width:76px;top:1502.9px;font:26.67px/26.67px 'Liberation Mono',monospace;color:#a3a3a3;text-align:right;white-space:pre;">36</div>
<div style="position:absolute;left:840px;width:76px;top:1550.9px;font:26.67px/26.67px 'Liberation Mono',monospace;color:#a3a3a3;text-align:right;white-space:pre;">37</div>
<div style="position:absolute;left:840px;width:76px;top:1598.9px;font:26.67px/26.67px 'Liberation Mono',monospace;color:#a3a3a3;text-align:right;white-space:pre;">38</div>
<div style="position:absolute;left:840px;width:76px;top:1646.9px;font:26.67px/26.67px 'Liberation Mono',monospace;color:#a3a3a3;text-align:right;white-space:pre;">39</div>
<div style="position:absolute;left:840px;width:76px;top:1694.9px;font:26.67px/26.67px 'Liberation Mono',monospace;color:#a3a3a3;text-align:right;white-space:pre;">40</div>
<div style="position:absolute;left:840px;width:76px;top:1742.9px;font:26.67px/26.67px 'Liberation Mono',monospace;color:#a3a3a3;text-align:right;white-space:pre;">41</div>
<svg style="position:absolute;left:989px;top:255px;" width="20" height="20" viewBox="0 0 20 20"><rect x="1" y="1" width="18" height="18" fill="#fff" stroke="#c6c6c6" stroke-width="1.6"/><path d="M5 10 H15 M10 5 V15" stroke="#c6c6c6" stroke-width="1.6"/></svg>
<svg style="position:absolute;left:989px;top:352px;" width="20" height="27" viewBox="0 0 20 27"><path d="M1 1 H19 V17 L10 25 L1 17 Z" fill="#fff" stroke="#c6c6c6" stroke-width="1.6"/><path d="M5.5 11 H14.5" stroke="#c6c6c6" stroke-width="1.6"/></svg>
<svg style="position:absolute;left:989px;top:539px;" width="20" height="27" viewBox="0 0 20 27"><path d="M1 26 H19 V10 L10 1 L1 10 Z" fill="#fff" stroke="#c6c6c6" stroke-width="1.6"/><path d="M5.5 16 H14.5" stroke="#c6c6c6" stroke-width="1.6"/></svg>
<svg style="position:absolute;left:989px;top:592px;" width="20" height="27" viewBox="0 0 20 27"><path d="M1 1 H19 V17 L10 25 L1 17 Z" fill="#fff" stroke="#c6c6c6" stroke-width="1.6"/><path d="M5.5 11 H14.5" stroke="#c6c6c6" stroke-width="1.6"/></svg>
<svg style="position:absolute;left:989px;top:635px;" width="20" height="27" viewBox="0 0 20 27"><path d="M1 26 H19 V10 L10 1 L1 10 Z" fill="#fff" stroke="#c6c6c6" stroke-width="1.6"/><path d="M5.5 16 H14.5" stroke="#c6c6c6" stroke-width="1.6"/></svg>
<svg style="position:absolute;left:989px;top:784px;" width="20" height="27" viewBox="0 0 20 27"><path d="M1 1 H19 V17 L10 25 L1 17 Z" fill="#fff" stroke="#c6c6c6" stroke-width="1.6"/><path d="M5.5 11 H14.5" stroke="#c6c6c6" stroke-width="1.6"/></svg>
<svg style="position:absolute;left:989px;top:827px;" width="20" height="27" viewBox="0 0 20 27"><path d="M1 26 H19 V10 L10 1 L1 10 Z" fill="#fff" stroke="#c6c6c6" stroke-width="1.6"/><path d="M5.5 16 H14.5" stroke="#c6c6c6" stroke-width="1.6"/></svg>
<svg style="position:absolute;left:989px;top:928px;" width="20" height="27" viewBox="0 0 20 27"><path d="M1 1 H19 V17 L10 25 L1 17 Z" fill="#fff" stroke="#c6c6c6" stroke-width="1.6"/><path d="M5.5 11 H14.5" stroke="#c6c6c6" stroke-width="1.6"/></svg>
<svg style="position:absolute;left:989px;top:1691px;" width="20" height="27" viewBox="0 0 20 27"><path d="M1 26 H19 V10 L10 1 L1 10 Z" fill="#fff" stroke="#c6c6c6" stroke-width="1.6"/><path d="M5.5 16 H14.5" stroke="#c6c6c6" stroke-width="1.6"/></svg>
<div style="position:absolute;left:1072px;top:961px;width:1px;height:720px;background:#e3e3e3;"></div>
<svg style="position:absolute;left:928px;top:678px;" width="36" height="36" viewBox="0 0 36 36"><ellipse cx="17" cy="16" rx="15" ry="11" transform="rotate(40 17 16)" fill="#72c05e"/><path d="M4 5 L22 21" stroke="#f2f2f2" stroke-width="3"/><circle cx="24" cy="23" r="10" fill="#f2f2f2"/><circle cx="24" cy="23" r="8.5" fill="#86cdea"/><path d="M27 19.5 A4.2 4.2 0 1 0 27 26.5" fill="none" stroke="#1f4a5a" stroke-width="2"/><path d="M24 28 L33 27 L28 34 Z" fill="#666" stroke="#f2f2f2" stroke-width="1"/></svg>
<svg style="position:absolute;left:928px;top:773px;" width="36" height="36" viewBox="0 0 36 36"><circle cx="17" cy="17" r="14.5" fill="#72c05e"/><path d="M5 5 L29 29" stroke="#f2f2f2" stroke-width="3.2"/><path d="M1 25 L9 18 V22 H22 V28 H9 V32 Z" fill="#8e9ba6" stroke="#f2f2f2" stroke-width="1.5"/></svg>
<svg style="position:absolute;left:928px;top:869px;" width="36" height="36" viewBox="0 0 36 36"><circle cx="17" cy="17" r="14.5" fill="#72c05e"/><path d="M5 5 L29 29" stroke="#f2f2f2" stroke-width="3.2"/><path d="M33 28 L25 21 V25 H12 V31 H25 V35 Z" fill="#8e9ba6" stroke="#f2f2f2" stroke-width="1.5"/></svg>
<div style="position:absolute;left:1000px;top:145px;width:2310px;height:1630px;overflow:hidden;"><div style="position:absolute;left:-1000px;top:-145px;width:3350px;height:1794px;">
<div style="position:absolute;left:1013px;top:158.9px;font:26.67px/26.67px 'Liberation Mono',monospace;white-space:pre;"><span style="color:#0033b3;">package</span><span style="color:#000000;"> com.ruoyi.framework.config;</span></div>
<div style="position:absolute;left:1013px;top:254.9px;font:26.67px/26.67px 'Liberation Mono',monospace;white-space:pre;"><span style="color:#0033b3;">import</span><span style="color:#000000;"> ...</span></div>
<div style="position:absolute;left:1013px;top:350.9px;font:26.67px/26.67px 'Liberation Mono',monospace;white-space:pre;"><span style="color:#8c8c8c;font-style:italic;">/**</span></div>
<div style="position:absolute;left:1013px;top:398.9px;font:26.67px/26.67px 'Liberation Mono',monospace;white-space:pre;"><span style="color:#8c8c8c;font-style:italic;"> * redis<span style="display:inline-block;width:28px;text-align:center;font-style:normal;">配</span><span style="display:inline-block;width:28px;text-align:center;font-style:normal;">置</span></span></div>
<div style="position:absolute;left:1013px;top:446.9px;font:26.67px/26.67px 'Liberation Mono',monospace;white-space:pre;"><span style="color:#8c8c8c;font-style:italic;"> * </span></div>
<div style="position:absolute;left:1013px;top:494.9px;font:26.67px/26.67px 'Liberation Mono',monospace;white-space:pre;"><span style="color:#8c8c8c;font-style:italic;"> * @author ruoyi</span></div>
<div style="position:absolute;left:1013px;top:542.9px;font:26.67px/26.67px 'Liberation Mono',monospace;white-space:pre;"><span style="color:#8c8c8c;font-style:italic;"> */</span></div>
<div style="position:absolute;left:1013px;top:590.9px;font:26.67px/26.67px 'Liberation Mono',monospace;white-space:pre;"><span style="color:#9e880d;">@Configuration</span></div>
<div style="position:absolute;left:1013px;top:638.9px;font:26.67px/26.67px 'Liberation Mono',monospace;white-space:pre;"><span style="color:#9e880d;">@EnableCaching</span></div>
<div style="position:absolute;left:1013px;top:686.9px;font:26.67px/26.67px 'Liberation Mono',monospace;white-space:pre;"><span style="color:#0033b3;">public class</span><span style="color:#000000;"> RedisConfig </span><span style="color:#0033b3;">extends</span><span style="color:#000000;"> CachingConfigurerSupport</span></div>
<div style="position:absolute;left:1013px;top:734.9px;font:26.67px/26.67px 'Liberation Mono',monospace;white-space:pre;"><span style="color:#000000;">{</span></div>
<div style="position:absolute;left:1013px;top:782.9px;font:26.67px/26.67px 'Liberation Mono',monospace;white-space:pre;"><span style="color:#9e880d;">    @Bean</span></div>
<div style="position:absolute;left:1013px;top:830.9px;font:26.67px/26.67px 'Liberation Mono',monospace;white-space:pre;"><span style="color:#9e880d;">    @SuppressWarnings</span><span style="color:#000000;">(value = { </span><span style="color:#067d17;">"unchecked"</span><span style="color:#000000;">, </span><span style="color:#067d17;">"rawtypes"</span><span style="color:#000000;"> })</span></div>
<div style="position:absolute;left:1013px;top:878.9px;font:26.67px/26.67px 'Liberation Mono',monospace;white-space:pre;"><span style="color:#000000;">    </span><span style="color:#0033b3;">public</span><span style="color:#000000;"> RedisTemplate&lt;Object, Object&gt; redisTemplate(RedisConnectionFactory connectionFactory)</span></div>
<div style="position:absolute;left:1013px;top:926.9px;font:26.67px/26.67px 'Liberation Mono',monospace;white-space:pre;"><span style="color:#000000;">    {</span></div>
<div style="position:absolute;left:1013px;top:974.9px;font:26.67px/26.67px 'Liberation Mono',monospace;white-space:pre;"><span style="color:#000000;">        RedisTemplate&lt;Object, Object&gt; template = </span><span style="color:#0033b3;">new</span><span style="color:#000000;"> RedisTemplate&lt;&gt;();</span></div>
<div style="position:absolute;left:1013px;top:1022.9px;font:26.67px/26.67px 'Liberation Mono',monospace;white-space:pre;"><span style="color:#000000;">        template.setConnectionFactory(connectionFactory);</span></div>
<div style="position:absolute;left:1013px;top:1118.9px;font:26.67px/26.67px 'Liberation Mono',monospace;white-space:pre;"><span style="color:#000000;">        FastJson2JsonRedisSerializer serializer = </span><span style="color:#0033b3;">new</span><span style="color:#000000;"> FastJson2JsonRedisSerializer(Object.</span><span style="color:#0033b3;">class</span><span style="color:#000000;">);</span></div>
<div style="position:absolute;left:1013px;top:1214.9px;font:26.67px/26.67px 'Liberation Mono',monospace;white-space:pre;"><span style="color:#8c8c8c;font-style:italic;">        // <span style="display:inline-block;width:28px;text-align:center;font-style:normal;">使</span><span style="display:inline-block;width:28px;text-align:center;font-style:normal;">用</span></span><span style="color:#8c8c8c;font-style:italic;">StringRedisSerializer</span><span style="color:#8c8c8c;font-style:italic;"><span style="display:inline-block;width:28px;text-align:center;font-style:normal;">来</span><span style="display:inline-block;width:28px;text-align:center;font-style:normal;">序</span><span style="display:inline-block;width:28px;text-align:center;font-style:normal;">列</span><span style="display:inline-block;width:28px;text-align:center;font-style:normal;">化</span><span style="display:inline-block;width:28px;text-align:center;font-style:normal;">和</span><span style="display:inline-block;width:28px;text-align:center;font-style:normal;">反</span><span style="display:inline-block;width:28px;text-align:center;font-style:normal;">序</span><span style="display:inline-block;width:28px;text-align:center;font-style:normal;">列</span><span style="display:inline-block;width:28px;text-align:center;font-style:normal;">化</span></span><span style="color:#8c8c8c;font-style:italic;">redis</span><span style="color:#8c8c8c;font-style:italic;"><span style="display:inline-block;width:28px;text-align:center;font-style:normal;">的</span></span><span style="color:#8c8c8c;font-style:italic;">key</span><span style="color:#8c8c8c;font-style:italic;"><span style="display:inline-block;width:28px;text-align:center;font-style:normal;">值</span></span></div>
<div style="position:absolute;left:1013px;top:1262.9px;font:26.67px/26.67px 'Liberation Mono',monospace;white-space:pre;"><span style="color:#000000;">        template.setKeySerializer(</span><span style="color:#0033b3;">new</span><span style="color:#000000;"> StringRedisSerializer());</span></div>
<div style="position:absolute;left:1013px;top:1310.9px;font:26.67px/26.67px 'Liberation Mono',monospace;white-space:pre;"><span style="color:#000000;">        template.setValueSerializer(serializer);</span></div>
<div style="position:absolute;left:1013px;top:1406.9px;font:26.67px/26.67px 'Liberation Mono',monospace;white-space:pre;"><span style="color:#8c8c8c;font-style:italic;">        // Hash<span style="display:inline-block;width:28px;text-align:center;font-style:normal;">的</span>key<span style="display:inline-block;width:28px;text-align:center;font-style:normal;">也</span><span style="display:inline-block;width:28px;text-align:center;font-style:normal;">采</span><span style="display:inline-block;width:28px;text-align:center;font-style:normal;">用</span>StringRedisSerializer<span style="display:inline-block;width:28px;text-align:center;font-style:normal;">的</span><span style="display:inline-block;width:28px;text-align:center;font-style:normal;">序</span><span style="display:inline-block;width:28px;text-align:center;font-style:normal;">列</span><span style="display:inline-block;width:28px;text-align:center;font-style:normal;">化</span><span style="display:inline-block;width:28px;text-align:center;font-style:normal;">方</span><span style="display:inline-block;width:28px;text-align:center;font-style:normal;">式</span></span></div>
<div style="position:absolute;left:1013px;top:1454.9px;font:26.67px/26.67px 'Liberation Mono',monospace;white-space:pre;"><span style="color:#000000;">        template.setHashKeySerializer(</span><span style="color:#0033b3;">new</span><span style="color:#000000;"> StringRedisSerializer());</span></div>
<div style="position:absolute;left:1013px;top:1502.9px;font:26.67px/26.67px 'Liberation Mono',monospace;white-space:pre;"><span style="color:#000000;">        template.setHashValueSerializer(serializer);</span></div>
<div style="position:absolute;left:1013px;top:1598.9px;font:26.67px/26.67px 'Liberation Mono',monospace;white-space:pre;"><span style="color:#000000;">        template.afterPropertiesSet();</span></div>
<div style="position:absolute;left:1013px;top:1646.9px;font:26.67px/26.67px 'Liberation Mono',monospace;white-space:pre;"><span style="color:#000000;">        </span><span style="color:#0033b3;">return</span><span style="color:#000000;"> template;</span></div>
<div style="position:absolute;left:1013px;top:1694.9px;font:26.67px/26.67px 'Liberation Mono',monospace;white-space:pre;"><span style="color:#000000;">    }</span></div>
</div></div>
<svg style="position:absolute;left:876px;top:106px;" width="16" height="24" viewBox="0 0 16 24"><path d="M12 3 L4 12 L12 21" fill="none" stroke="#d0d0d0" stroke-width="2"/></svg>
<svg style="position:absolute;left:919.5px;top:103.5px;" width="29.0" height="29.0" viewBox="0 0 29.0 29.0"><circle cx="14.5" cy="14.5" r="13.5" fill="#8fcfe9"/><path d="M 18.35 10.40 A 5.13 5.13 0 1 0 18.35 18.60" fill="none" stroke="#2b3a42" stroke-width="2.4" stroke-linecap="butt"/></svg>
<div style="position:absolute;left:959.0px;top:107.0px;font:normal normal 22.5px/22.5px 'Liberation Sans',sans-serif;color:#000;white-space:pre;letter-spacing:0.05px;">GenUtils.java</div>
<div style="position:absolute;left:2000px;width:341px;top:107.0px;font:22.5px/22.5px 'Liberation Sans',sans-serif;color:#b35a00;text-align:right;white-space:pre;letter-spacing:0.5px;">SysUserMapper.xml</div>
<svg style="position:absolute;left:2353px;top:109px;" width="18" height="18" viewBox="0 0 18 18"><path d="M2 2 L16 16 M16 2 L2 16" stroke="#b8b8b8" stroke-width="2"/></svg>
<svg style="position:absolute;left:2402px;top:104px;" width="30" height="30" viewBox="0 0 30 30"><path d="M6 0 H16 V12 H0 V6 Z" fill="#b5bec4"/><path d="M0 6 L6 0 V6 Z" fill="#fff" opacity="0.6"/><rect x="0" y="13" width="30" height="15" fill="#f08b5a"/><path d="M10 16 L6 20.5 L10 25 M20 16 L24 20.5 L20 25" fill="none" stroke="#5a2a10" stroke-width="1.6"/></svg>
<div style="position:absolute;left:2441.0px;top:107.0px;font:normal normal 22.5px/22.5px 'Liberation Sans',sans-serif;color:#000;white-space:pre;letter-spacing:0.45px;">mybatis-config.xml</div>
<svg style="position:absolute;left:2649px;top:109px;" width="18" height="18" viewBox="0 0 18 18"><path d="M2 2 L16 16 M16 2 L2 16" stroke="#b8b8b8" stroke-width="2"/></svg>
<svg style="position:absolute;left:2696.5px;top:103.5px;" width="29.0" height="29.0" viewBox="0 0 29.0 29.0"><circle cx="14.5" cy="14.5" r="13.5" fill="#8fcfe9"/><path d="M 18.35 10.40 A 5.13 5.13 0 1 0 18.35 18.60" fill="none" stroke="#2b3a42" stroke-width="2.4" stroke-linecap="butt"/></svg>
<div style="position:absolute;left:2737.0px;top:107.0px;font:normal normal 22.5px/22.5px 'Liberation Sans',sans-serif;color:#000;white-space:pre;letter-spacing:0.05px;">SwaggerConfig.java</div>
<svg style="position:absolute;left:2953px;top:109px;" width="18" height="18" viewBox="0 0 18 18"><path d="M2 2 L16 16 M16 2 L2 16" stroke="#b8b8b8" stroke-width="2"/></svg>
<div style="position:absolute;left:2983px;top:91px;width:270px;height:53px;background:#ffffff;"></div>
<div style="position:absolute;left:2983px;top:140px;width:270px;height:5px;background:#9ca8b9;"></div>
<svg style="position:absolute;left:3000.5px;top:103.5px;" width="29.0" height="29.0" viewBox="0 0 29.0 29.0"><circle cx="14.5" cy="14.5" r="13.5" fill="#8fcfe9"/><path d="M 18.35 10.40 A 5.13 5.13 0 1 0 18.35 18.60" fill="none" stroke="#2b3a42" stroke-width="2.4" stroke-linecap="butt"/></svg>
<div style="position:absolute;left:3040.0px;top:107.0px;font:normal normal 22.5px/22.5px 'Liberation Sans',sans-serif;color:#000;white-space:pre;letter-spacing:0.05px;">RedisConfig.java</div>
<svg style="position:absolute;left:3223px;top:109px;" width="18" height="18" viewBox="0 0 18 18"><path d="M2 2 L16 16 M16 2 L2 16" stroke="#b8b8b8" stroke-width="2"/></svg>
<svg style="position:absolute;left:3270px;top:108px;" width="24" height="16" viewBox="0 0 24 16"><path d="M3 3 L12 12 L21 3" fill="none" stroke="#6e6e6e" stroke-width="2.5"/></svg>
<svg style="position:absolute;left:3166px;top:160px;" width="30" height="26" viewBox="0 0 30 26"><path d="M3 12 L10 19 L24 3" fill="none" stroke="#59a869" stroke-width="3.5"/><path d="M3 23 L8 19 L12 23 L16 19 L20 23" fill="none" stroke="#59a869" stroke-width="1.8"/></svg>
<div style="position:absolute;left:3202.0px;top:159.7px;font:normal normal 24px/24px 'Liberation Sans',sans-serif;color:#6e6e6e;white-space:pre;letter-spacing:0px;">6</div>
<svg style="position:absolute;left:3232px;top:162px;" width="24" height="16" viewBox="0 0 24 16"><path d="M3 13 L12 4 L21 13" fill="none" stroke="#6e6e6e" stroke-width="2.5"/></svg>
<svg style="position:absolute;left:3274px;top:164px;" width="24" height="16" viewBox="0 0 24 16"><path d="M3 3 L12 12 L21 3" fill="none" stroke="#6e6e6e" stroke-width="2.5"/></svg>
<div style="position:absolute;left:3290px;top:203px;width:14px;height:777px;background:#c8c8c8;border-radius:7px;"></div>
<div style="position:absolute;left:3310px;top:91px;width:2px;height:1684px;background:#cbcbcb;"></div>
<div style="position:absolute;left:3312px;top:91px;width:38px;height:1684px;background:#f2f2f2;"></div>
<div style="position:absolute;left:0px;top:1775px;width:3350px;height:1px;background:#cfcfcf;"></div>
<div style="position:absolute;left:0px;top:1776px;width:3350px;height:18px;background:#efefef;"></div>
<svg style="position:absolute;left:1824px;top:48px;" width="34" height="28" viewBox="0 0 34 28"><circle cx="19" cy="7" r="5.5" fill="#6e6e6e"/><path d="M13 14 Q19 11 25 14 Q30 17 30 24 H18 Z" fill="#6e6e6e"/><circle cx="11" cy="10" r="7" fill="#6e6e6e" stroke="#f2f2f2" stroke-width="1.5"/><path d="M1 28 Q1 18 11 18 Q21 18 21 28 Z" fill="#6e6e6e" stroke="#f2f2f2" stroke-width="1.5"/></svg>
<svg style="position:absolute;left:1860px;top:59px;" width="16" height="9" viewBox="0 0 16 9"><path d="M0 0 H16 L8 8.5 Z" fill="#6e6e6e"/></svg>
<div style="position:absolute;left:1892px;top:41px;width:1.5px;height:40px;background:#d0d0d0;"></div>
<svg style="position:absolute;left:1908px;top:46px;" width="34" height="34" viewBox="0 0 34 34"><path d="M3 10 L14 1 L19 6 L15 9 L31 30 L26 34 L10 14 L7 17 Z" fill="#4ea55e"/></svg>
<div style="position:absolute;left:1964px;top:40.5px;width:279px;height:48px;background:#ffffff;border:1.5px solid #c6c6c6;border-radius:7px;box-sizing:border-box;"></div>
<svg style="position:absolute;left:1982px;top:49px;" width="34" height="30" viewBox="0 0 34 30"><path d="M2 22 C2 10 14 6 28 2 C30 12 26 20 14 24 Z" fill="#6cb864"/><path d="M17 17 L24 13 L31 17 V25 L24 29 L17 25 Z" fill="#9aa7b0"/><circle cx="24" cy="21" r="3.5" fill="none" stroke="#fff" stroke-width="1.6"/></svg>
<div style="position:absolute;left:2023.0px;top:50.8px;font:normal normal 22.5px/22.5px 'Liberation Sans',sans-serif;color:#000;white-space:pre;letter-spacing:0.55px;">RuoYiApplication</div>
<svg style="position:absolute;left:2207px;top:58px;" width="18" height="10" viewBox="0 0 18 10"><path d="M0 0 H17 L8.5 9.5 Z" fill="#6e6e6e"/></svg>
<svg style="position:absolute;left:2271px;top:50px;" width="22" height="24" viewBox="0 0 22 24"><path d="M1 0 L21 12 L1 24 Z" fill="#4ea55e"/></svg>
<svg style="position:absolute;left:2318px;top:47px;" width="28" height="28" viewBox="0 0 28 28"><path d="M7 2 L11 7 M21 2 L17 7" stroke="#4ea55e" stroke-width="3"/><ellipse cx="14" cy="16" rx="9" ry="10" fill="#4ea55e"/><rect x="0" y="11" width="28" height="3" fill="#4ea55e"/><rect x="0" y="19" width="28" height="3" fill="#4ea55e"/><rect x="9" y="12" width="10" height="2.5" fill="#f2f2f2"/><rect x="9" y="18" width="10" height="2.5" fill="#f2f2f2"/></svg>
<svg style="position:absolute;left:2369px;top:49px;" width="32" height="30" viewBox="0 0 32 30"><path d="M1 3 L10 0 L19 3 V14 Q19 24 10 28 Q1 24 1 14 Z" fill="#c4c4c4"/><path d="M14 14 L30 22 L14 30 Z" fill="#c4c4c4" stroke="#f2f2f2" stroke-width="1.5"/></svg>
<svg style="position:absolute;left:2416px;top:46px;" width="34" height="34" viewBox="0 0 34 34"><circle cx="13" cy="14" r="10.5" fill="none" stroke="#6e6e6e" stroke-width="3"/><path d="M13 8 V14 L16 18" fill="none" stroke="#6e6e6e" stroke-width="2.2"/><path d="M16 14 L32 23 L16 33 Z" fill="#e5484d" stroke="#f2f2f2" stroke-width="1.5"/></svg>
<svg style="position:absolute;left:2462px;top:59px;" width="16" height="9" viewBox="0 0 16 9"><path d="M0 0 H16 L8 8.5 Z" fill="#6e6e6e"/></svg>
<svg style="position:absolute;left:2494px;top:45px;" width="34" height="34" viewBox="0 0 34 34"><path d="M4 18 L10 12 L24 1 Q27 0 26 4 L16 19 L10 25 Z" fill="#7cb82f"/><path d="M2 15 L9 11 L6 17 Z" fill="#7cb82f"/><path d="M11 27 L15 20 L10 24 Z" fill="#7cb82f"/><circle cx="19" cy="9" r="2" fill="#f2f2f2"/><path d="M17 16 L32 24 L17 32 Z" fill="#6e6e6e" stroke="#f2f2f2" stroke-width="1.2"/></svg>
<svg style="position:absolute;left:2546px;top:45px;" width="34" height="34" viewBox="0 0 34 34"><path d="M4 18 L10 12 L24 1 Q27 0 26 4 L16 19 L10 25 Z" fill="#7cb82f"/><path d="M2 15 L9 11 L6 17 Z" fill="#7cb82f"/><path d="M11 27 L15 20 L10 24 Z" fill="#7cb82f"/><circle cx="19" cy="9" r="2" fill="#f2f2f2"/><ellipse cx="24" cy="24" rx="6" ry="8" fill="#6e6e6e" stroke="#f2f2f2" stroke-width="1.2"/><rect x="15" y="21" width="18" height="2" fill="#6e6e6e"/><rect x="15" y="26" width="18" height="2" fill="#6e6e6e"/></svg>
<div style="position:absolute;left:2596.5px;top:40.8px;width:137px;height:42.5px;background:#ffffff;border:1.5px solid #c6c6c6;border-radius:7px;box-sizing:border-box;"></div>
<div style="position:absolute;left:2615.0px;top:51.1px;font:normal normal 22px/22px 'Liberation Sans',sans-serif;color:#000;white-space:pre;letter-spacing:0.5px;">JRebel</div>
<svg style="position:absolute;left:2698px;top:58px;" width="17" height="10" viewBox="0 0 17 10"><path d="M0 0 H17 L8.5 9.5 Z" fill="#6e6e6e"/></svg>
<svg style="position:absolute;left:2750px;top:45px;" width="36" height="34" viewBox="0 0 36 34"><path d="M6 18 L12 12 L26 2 Q29 1 28 5 L18 19 L12 25 Z" fill="#c8c8c8"/><path d="M3 16 L11 11 L8 18 Z" fill="#c8c8c8"/><ellipse cx="20" cy="27" rx="12" ry="6" fill="#c8c8c8"/></svg>
<div style="position:absolute;left:2810px;top:52px;width:20px;height:20px;background:#bdbdbd;"></div>
<div style="position:absolute;left:2852px;top:42px;width:1.5px;height:39px;background:#d0d0d0;"></div>
<div style="position:absolute;left:2873.0px;top:51.1px;font:normal normal 22px/22px 'Liberation Sans',sans-serif;color:#000;white-space:pre;letter-spacing:0.3px;">Git:</div>
<svg style="position:absolute;left:2933px;top:50px;" width="24" height="23" viewBox="0 0 24 23"><path d="M21 2 L5 18" stroke="#3d9fe0" stroke-width="3.5"/><path d="M1 8 V22 H15 Z" fill="#3d9fe0"/></svg>
<svg style="position:absolute;left:2983px;top:49px;" width="30" height="25" viewBox="0 0 30 25"><path d="M2 12 L10 20 L27 3" fill="none" stroke="#59a869" stroke-width="4"/></svg>
<svg style="position:absolute;left:3035px;top:51px;" width="25" height="23" viewBox="0 0 25 23"><path d="M2 21 L18 5" stroke="#59a869" stroke-width="3.5"/><path d="M8 1 H23 V16 Z" fill="#59a869"/></svg>
<svg style="position:absolute;left:3085px;top:47px;" width="30" height="30" viewBox="0 0 30 30"><circle cx="15" cy="15" r="12.5" fill="none" stroke="#6e6e6e" stroke-width="3"/><path d="M14 8 V15 L19 19" fill="none" stroke="#6e6e6e" stroke-width="2.5"/></svg>
<svg style="position:absolute;left:3139px;top:48px;" width="30" height="27" viewBox="0 0 30 27"><path d="M8 9 H17 A7.5 7.5 0 0 1 17 24 H8" fill="none" stroke="#6e6e6e" stroke-width="3.2"/><path d="M1 9 L9 2 V16 Z" fill="#6e6e6e"/></svg>
<div style="position:absolute;left:3184px;top:42px;width:1.5px;height:39px;background:#d0d0d0;"></div>
<svg style="position:absolute;left:3202px;top:46px;" width="32" height="32" viewBox="0 0 32 32"><circle cx="13" cy="13" r="9.5" fill="none" stroke="#6e6e6e" stroke-width="3.2"/><path d="M20 20 L29 29" stroke="#6e6e6e" stroke-width="3.8"/></svg>
<svg style="position:absolute;left:3256px;top:48px;" width="28" height="28" viewBox="0 0 28 28"><polygon points="12.30,1.11 15.70,1.11 17.58,5.35 19.70,6.57 24.31,6.09 26.01,9.03 23.28,12.78 23.28,15.22 26.01,18.97 24.31,21.91 19.70,21.43 17.58,22.65 15.70,26.89 12.30,26.89 10.42,22.65 8.30,21.43 3.69,21.91 1.99,18.97 4.72,15.22 4.72,12.78 1.99,9.03 3.69,6.09 8.30,6.57 10.42,5.35" fill="#6e6e6e"/><circle cx="14" cy="14" r="8.06" fill="#6e6e6e"/><circle cx="14" cy="14" r="4.16" fill="#f2f2f2"/></svg>
<svg style="position:absolute;left:3305px;top:47px;" width="33" height="30" viewBox="0 0 33 30"><defs><linearGradient id="tg" x1="0" y1="0" x2="1" y2="1"><stop offset="0" stop-color="#f3e73a"/><stop offset="0.5" stop-color="#3fc48a"/><stop offset="1" stop-color="#1b6fd6"/></linearGradient></defs><path d="M2 2 Q1 0 4 1 L31 14 Q33 15 31 17 L10 29 Q5 31 4 26 Z" fill="url(#tg)"/><path d="M15 1 L31 14 L20 22 Z" fill="#1a8ad8" opacity="0.8"/></svg>
<div style="position:absolute;left:1.5px;top:182px;transform:rotate(-90deg);transform-origin:0 0;font:23px/23px 'Liberation Sans',sans-serif;color:#000;white-space:pre;letter-spacing:0px;">Project</div>
<svg style="position:absolute;left:2px;top:192px;" width="24" height="19" viewBox="0 0 24 19"><path d="M0 0 H9 L12 4 H22 V18 H0 Z" fill="#6e6e6e"/></svg>
<div style="position:absolute;left:1.5px;top:335px;transform:rotate(-90deg);transform-origin:0 0;font:23px/23px 'Liberation Sans',sans-serif;color:#000;white-space:pre;letter-spacing:0px;">Commit</div>
<svg style="position:absolute;left:0px;top:343px;" width="26" height="22" viewBox="0 0 26 22"><circle cx="13" cy="11" r="6.5" fill="none" stroke="#6e6e6e" stroke-width="3.5"/><rect x="0" y="9.5" width="6" height="3" fill="#6e6e6e"/><rect x="20" y="9.5" width="6" height="3" fill="#6e6e6e"/></svg>
<div style="position:absolute;left:1.5px;top:1410px;transform:rotate(-90deg);transform-origin:0 0;font:23px/23px 'Liberation Sans',sans-serif;color:#000;white-space:pre;letter-spacing:0px;">Structure</div>
<svg style="position:absolute;left:4px;top:1420px;" width="22" height="22" viewBox="0 0 22 22"><rect x="12" y="0" width="9" height="9" fill="#6e6e6e"/><rect x="0" y="11" width="9" height="9" fill="#6e6e6e"/><rect x="12" y="11" width="9" height="9" fill="#6e6e6e"/></svg>
<div style="position:absolute;left:1.5px;top:1578px;transform:rotate(-90deg);transform-origin:0 0;font:23px/23px 'Liberation Sans',sans-serif;color:#000;white-space:pre;letter-spacing:-0.4px;">Favorites</div>
<svg style="position:absolute;left:2px;top:1584px;" width="28" height="28" viewBox="0 0 28 28"><path d="M14 1 L17.5 10 L27 10.5 L19.5 16.5 L22 26 L14 20.5 L6 26 L8.5 16.5 L1 10.5 L10.5 10 Z" fill="#6e6e6e"/></svg>
<div style="position:absolute;left:2.5px;top:1720px;transform:rotate(-90deg);transform-origin:0 0;font:23px/23px 'Liberation Sans',sans-serif;color:#000;white-space:pre;letter-spacing:-0.3px;">JRebel</div>
<svg style="position:absolute;left:0px;top:1724px;" width="32" height="30" viewBox="0 0 32 30"><ellipse cx="15" cy="13" rx="12" ry="6" transform="rotate(-40 15 13)" fill="#84bd3a"/><path d="M0 16 L8 11 L9 19 Z" fill="#84bd3a"/><path d="M10 28 L13 19 L18 21 Z" fill="#84bd3a"/><circle cx="17" cy="10" r="2.2" fill="#e8f5d0"/></svg>
<div style="position:absolute;left:13.0px;top:1739.3px;font:normal bold 15px/15px 'Liberation Sans',sans-serif;color:#111;white-space:pre;letter-spacing:-0.5px;">JR</div>
<svg style="position:absolute;left:3316px;top:110px;" width="28" height="30" viewBox="0 0 28 30"><ellipse cx="14" cy="5" rx="11" ry="4.5" fill="#6e6e6e"/><path d="M3 9 Q14 15 25 9 V13 Q14 19 3 13 Z" fill="#6e6e6e"/><path d="M3 17 Q14 23 25 17 V21 Q14 27 3 21 Z" fill="#6e6e6e"/><path d="M3 25 Q14 31 25 25 V26 Q14 32 3 26 Z" fill="#6e6e6e"/></svg>
<div style="position:absolute;left:3343px;top:146px;transform:rotate(90deg);transform-origin:0 0;font:23px/23px 'Liberation Sans',sans-serif;color:#000;white-space:pre;letter-spacing:-0.3px;">Database</div>
<div style="position:absolute;left:3318.0px;top:278.6px;font:italic bold 30px/30px 'Liberation Sans',sans-serif;color:#6e6e6e;white-space:pre;letter-spacing:0px;">m</div>
<div style="position:absolute;left:3343px;top:317px;transform:rotate(90deg);transform-origin:0 0;font:23px/23px 'Liberation Sans',sans-serif;color:#000;white-space:pre;letter-spacing:-0.2px;">Maven</div>
<div style="position:absolute;left:85.0px;top:1787.4px;font:normal normal 22px/22px 'Liberation Sans',sans-serif;color:#000;white-space:pre;letter-spacing:0.6px;">Git</div>
<div style="position:absolute;left:187.0px;top:1787.4px;font:normal normal 22px/22px 'Liberation Sans',sans-serif;color:#000;white-space:pre;letter-spacing:0.6px;">TODO</div>
<div style="position:absolute;left:322.0px;top:1787.4px;font:normal normal 22px/22px 'Liberation Sans',sans-serif;color:#000;white-space:pre;letter-spacing:0.6px;">Problems</div>
<div style="position:absolute;left:494.0px;top:1787.4px;font:normal normal 22px/22px 'Liberation Sans',sans-serif;color:#000;white-space:pre;letter-spacing:0.6px;">Terminal</div>
<div style="position:absolute;left:656.0px;top:1787.4px;font:normal normal 22px/22px 'Liberation Sans',sans-serif;color:#000;white-space:pre;letter-spacing:0.6px;">Profiler</div>
<div style="position:absolute;left:803.0px;top:1787.4px;font:normal normal 22px/22px 'Liberation Sans',sans-serif;color:#000;white-space:pre;letter-spacing:0.6px;">Endpoints</div>
<div style="position:absolute;left:978.0px;top:1787.4px;font:normal normal 22px/22px 'Liberation Sans',sans-serif;color:#000;white-space:pre;letter-spacing:0.6px;">Spring</div>
<svg style="position:absolute;left:52px;top:1785px;" width="26" height="12" viewBox="0 0 26 12"><rect x="2" y="0" width="3" height="12" fill="#6e6e6e"/><path d="M8 12 L15 4 L22 12 Z" fill="#6e6e6e"/></svg>
<svg style="position:absolute;left:155px;top:1786px;" width="22" height="10" viewBox="0 0 22 10"><rect x="0" y="0" width="4" height="3" fill="#6e6e6e"/><rect x="7" y="0" width="14" height="3" fill="#6e6e6e"/></svg>
<svg style="position:absolute;left:290px;top:1786px;" width="28" height="10" viewBox="0 0 28 10"><circle cx="14" cy="14" r="12" fill="#6e6e6e"/><rect x="12.5" y="3" width="3" height="8" fill="#efefef"/></svg>
<svg style="position:absolute;left:462px;top:1786px;" width="24" height="10" viewBox="0 0 24 10"><rect x="0" y="0" width="24" height="10" fill="#6e6e6e"/><path d="M5 1 L11 7" stroke="#efefef" stroke-width="2"/></svg>
<svg style="position:absolute;left:624px;top:1785px;" width="26" height="11" viewBox="0 0 26 11"><circle cx="13" cy="14" r="11" fill="none" stroke="#6e6e6e" stroke-width="2.5"/><rect x="12" y="4" width="2.5" height="7" fill="#6e6e6e"/></svg>
<svg style="position:absolute;left:775px;top:1784px;" width="26" height="12" viewBox="0 0 26 12"><circle cx="17" cy="5" r="4.5" fill="#6e6e6e"/><rect x="14" y="8" width="6" height="4" fill="#6e6e6e"/><rect x="2" y="10" width="5" height="2" fill="#6e6e6e"/></svg>
<svg style="position:absolute;left:945px;top:1786px;" width="28" height="10" viewBox="0 0 28 10"><path d="M2 10 Q12 2 26 0 L22 10 Z" fill="#6e6e6e"/></svg>
<svg style="position:absolute;left:2916px;top:1784px;" width="26" height="26" viewBox="0 0 26 26"><circle cx="13" cy="13" r="12" fill="#e5484d"/></svg>
<div style="position:absolute;left:2950.0px;top:1787.4px;font:normal normal 22px/22px 'Liberation Sans',sans-serif;color:#000;white-space:pre;letter-spacing:0.6px;">Event Log</div>
<svg style="position:absolute;left:3090px;top:1784px;" width="30" height="12" viewBox="0 0 30 12"><path d="M4 12 L14 4 L26 0 L22 12 Z" fill="none" stroke="#8a8a8a" stroke-width="1.6"/></svg>
<div style="position:absolute;left:3134.0px;top:1787.4px;font:normal normal 22px/22px 'Liberation Sans',sans-serif;color:#000;white-space:pre;letter-spacing:0.6px;">JRebel Console</div>
<div style="position:absolute;left:1050px;top:73px;width:1204px;height:1128px;background:#f2f2f2;box-shadow:0 4px 22px rgba(0,0,0,0.28);"></div>
<div style="position:absolute;left:1063.0px;top:96.4px;font:normal bold 26px/26px 'Liberation Sans',sans-serif;color:#000;white-space:pre;letter-spacing:0.3px;">Find in Files</div>
<div style="position:absolute;left:1232.0px;top:99.4px;font:normal normal 22px/22px 'Liberation Sans',sans-serif;color:#000;white-space:pre;letter-spacing:0.0px;">1 match in 1 file</div>
<div style="position:absolute;left:1755px;top:95px;width:26px;height:26px;background:#fff;border:1.5px solid #b9b9b9;border-radius:5px;box-sizing:border-box;"></div>
<div style="position:absolute;left:1795.0px;top:96.0px;font:normal normal 26px/26px 'Liberation Sans',sans-serif;color:#000;white-space:pre;letter-spacing:0.4px;">File mask:</div>
<div style="position:absolute;left:1931px;top:85px;width:146px;height:46px;background:#f2f2f2;border:1.5px solid #cfcfcf;border-radius:6px;box-sizing:border-box;"></div>
<div style="position:absolute;left:2032px;top:86px;width:1.5px;height:44px;background:#cfcfcf;"></div>
<svg style="position:absolute;left:2045px;top:103px;" width="22" height="12" viewBox="0 0 22 12"><path d="M0 0 H20 L10 10 Z" fill="#a9a9a9"/></svg>
<svg style="position:absolute;left:2136px;top:95px;" width="28" height="26" viewBox="0 0 28 26"><path d="M1 1 H27 L17 12 V25 H11 V12 Z" fill="#6e6e6e"/></svg>
<div style="position:absolute;left:2184px;top:84px;width:1.5px;height:47px;background:#cfcfcf;"></div>
<svg style="position:absolute;left:2204px;top:92px;" width="32" height="32" viewBox="0 0 32 32"><path d="M20.1 1.7 L29.7 11.3 L21.7 16.7 L20.6 23.8 L16.1 19.8 L1.9 30 L11.9 15.5 L7.7 10.8 L15 11.5 Z" fill="#6e6e6e"/></svg>
<div style="position:absolute;left:1050px;top:143px;width:1204px;height:1.5px;background:#c9c9c9;"></div>
<div style="position:absolute;left:1050px;top:144.5px;width:1204px;height:55.5px;background:#ffffff;"></div>
<svg style="position:absolute;left:1054px;top:157px;" width="30" height="30" viewBox="0 0 30 30"><circle cx="11" cy="11" r="8.5" fill="none" stroke="#8a8a8a" stroke-width="2.2"/><path d="M17 17 L24 24" stroke="#8a8a8a" stroke-width="2.6"/><path d="M22 10 L28 10 L25 14 Z" fill="#8a8a8a"/></svg>
<div style="position:absolute;left:1101.0px;top:162.3px;font:normal normal 23px/23px 'Liberation Sans',sans-serif;color:#000;white-space:pre;letter-spacing:2.78px;">spring-boot-starter-data-redis</div>
<svg style="position:absolute;left:2009px;top:161px;" width="18" height="18" viewBox="0 0 18 18"><path d="M2 2 L16 16 M16 2 L2 16" stroke="#b9b9b9" stroke-width="2"/></svg>
<svg style="position:absolute;left:2046px;top:156px;" width="32" height="30" viewBox="0 0 32 30"><path d="M6 6 H20 A7 7 0 0 1 20 20 H9" fill="none" stroke="#b9b9b9" stroke-width="2.4"/><path d="M12 14 L5 20 L12 26 Z" fill="#b9b9b9"/></svg>
<div style="position:absolute;left:2094px;top:148px;width:1.5px;height:44px;background:#d0d0d0;"></div>
<div style="position:absolute;left:2107px;top:148.5px;width:42px;height:42.5px;background:#dde6ef;border-radius:5px;"></div>
<div style="position:absolute;left:2111.0px;top:160.7px;font:normal bold 24px/24px 'Liberation Sans',sans-serif;color:#389fd6;white-space:pre;letter-spacing:-0.5px;">Cc</div>
<div style="position:absolute;left:2165.0px;top:160.7px;font:normal bold 24px/24px 'Liberation Sans',sans-serif;color:#b4bcc2;white-space:pre;letter-spacing:0px;">W</div>
<div style="position:absolute;left:2220.0px;top:160.7px;font:normal bold 24px/24px 'Liberation Sans',sans-serif;color:#b4bcc2;white-space:pre;letter-spacing:0px;">.*</div>
<div style="position:absolute;left:1050px;top:199.5px;width:1204px;height:1.5px;background:#c9c9c9;"></div>
<div style="position:absolute;left:1066px;top:225px;width:112px;height:42px;background:#d2d2d2;border-radius:6px;"></div>
<div style="position:absolute;left:1074.0px;top:236.1px;font:normal normal 22px/22px 'Liberation Sans',sans-serif;color:#222;white-space:pre;letter-spacing:0.05px;">In Project</div>
<div style="position:absolute;left:1187.0px;top:236.1px;font:normal normal 22px/22px 'Liberation Sans',sans-serif;color:#222;white-space:pre;letter-spacing:0.3px;">Module</div>
<div style="position:absolute;left:1276.0px;top:236.1px;font:normal normal 22px/22px 'Liberation Sans',sans-serif;color:#222;white-space:pre;letter-spacing:0.5px;">Directory</div>
<div style="position:absolute;left:1386.0px;top:236.1px;font:normal normal 22px/22px 'Liberation Sans',sans-serif;color:#222;white-space:pre;letter-spacing:0.5px;">Scope</div>
<div style="position:absolute;left:1098px;top:258px;width:14px;height:2px;background:#1a1a1a;"></div>
<div style="position:absolute;left:1187px;top:258px;width:18px;height:2px;background:#1a1a1a;"></div>
<div style="position:absolute;left:1276px;top:258px;width:16px;height:2px;background:#1a1a1a;"></div>
<div style="position:absolute;left:1386px;top:258px;width:15px;height:2px;background:#1a1a1a;"></div>
<div style="position:absolute;left:1050px;top:278px;width:1204px;height:48px;background:#2675bf;"></div>
<div style="position:absolute;left:1060px;top:292.5px;font:23px/23px 'Liberation Sans',sans-serif;color:#fff;white-space:pre;letter-spacing:2.78px;">&lt;artifactId&gt;<span style="background:#c5c07b;color:#2f2f1e;border-radius:4px;padding:5px 0 0 0;">spring-boot-starter-data-redis</span>&lt;/artifactId&gt;</div>
<div style="position:absolute;left:1600px;width:647px;top:290.0px;font:26px/26px 'Liberation Sans',sans-serif;color:#fff;text-align:right;white-space:pre;letter-spacing:1.1px;">ruoyi-common/pom.xml 108</div>
<div style="position:absolute;left:1050px;top:326px;width:1204px;height:216px;background:#ffffff;"></div>
<div style="position:absolute;left:1050px;top:542px;width:1204px;height:1.5px;background:#c9c9c9;"></div>
<div style="position:absolute;left:1073.0px;top:558.0px;font:normal normal 26px/26px 'Liberation Sans',sans-serif;color:#000;white-space:pre;letter-spacing:0.9px;">pom.xml</div>
<div style="position:absolute;left:1190.0px;top:558.0px;font:normal normal 26px/26px 'Liberation Sans',sans-serif;color:#7f7f7f;white-space:pre;letter-spacing:1.2px;">ruoyi-common</div>
<div style="position:absolute;left:1050px;top:598px;width:1204px;height:523px;overflow:hidden;background:#fff;"><div style="position:absolute;left:-1050px;top:-598px;width:3350px;height:1794px;">
<div style="position:absolute;left:1050px;top:598px;width:119px;height:523px;background:#f2f2f2;"></div>
<div style="position:absolute;left:1050px;top:772.4px;width:1204px;height:48px;background:#fbf9ec;"></div>
<div style="position:absolute;left:1050px;top:772.4px;width:119px;height:48px;background:#f7f5ea;"></div>
<div style="position:absolute;left:1231px;top:598px;width:1px;height:523px;background:#e3e3e3;"></div>
<div style="position:absolute;left:1295px;top:724.4px;width:1px;height:96px;background:#e3e3e3;"></div>
<div style="position:absolute;left:1295px;top:1012.4px;width:1px;height:96px;background:#e3e3e3;"></div>
<div style="position:absolute;left:1030px;width:80px;top:593.6px;font:26.67px/26.67px 'Liberation Mono',monospace;color:#a3a3a3;text-align:right;white-space:pre;">104</div>
<div style="position:absolute;left:1030px;width:80px;top:641.6px;font:26.67px/26.67px 'Liberation Mono',monospace;color:#a3a3a3;text-align:right;white-space:pre;">105</div>
<div style="position:absolute;left:1030px;width:80px;top:689.6px;font:26.67px/26.67px 'Liberation Mono',monospace;color:#a3a3a3;text-align:right;white-space:pre;">106</div>
<div style="position:absolute;left:1030px;width:80px;top:737.6px;font:26.67px/26.67px 'Liberation Mono',monospace;color:#a3a3a3;text-align:right;white-space:pre;">107</div>
<div style="position:absolute;left:1030px;width:80px;top:785.6px;font:26.67px/26.67px 'Liberation Mono',monospace;color:#a3a3a3;text-align:right;white-space:pre;">108</div>
<div style="position:absolute;left:1030px;width:80px;top:833.6px;font:26.67px/26.67px 'Liberation Mono',monospace;color:#a3a3a3;text-align:right;white-space:pre;">109</div>
<div style="position:absolute;left:1030px;width:80px;top:881.6px;font:26.67px/26.67px 'Liberation Mono',monospace;color:#a3a3a3;text-align:right;white-space:pre;">110</div>
<div style="position:absolute;left:1030px;width:80px;top:929.6px;font:26.67px/26.67px 'Liberation Mono',monospace;color:#a3a3a3;text-align:right;white-space:pre;">111</div>
<div style="position:absolute;left:1030px;width:80px;top:977.6px;font:26.67px/26.67px 'Liberation Mono',monospace;color:#a3a3a3;text-align:right;white-space:pre;">112</div>
<div style="position:absolute;left:1030px;width:80px;top:1025.6px;font:26.67px/26.67px 'Liberation Mono',monospace;color:#a3a3a3;text-align:right;white-space:pre;">113</div>
<div style="position:absolute;left:1030px;width:80px;top:1073.6px;font:26.67px/26.67px 'Liberation Mono',monospace;color:#a3a3a3;text-align:right;white-space:pre;">114</div>
<div style="position:absolute;left:1030px;width:80px;top:1121.6px;font:26.67px/26.67px 'Liberation Mono',monospace;color:#a3a3a3;text-align:right;white-space:pre;">115</div>
<svg style="position:absolute;left:1120px;top:676.4px;" width="40" height="40" viewBox="0 0 40 40"><path d="M20 22 H37 A17 17 0 1 1 20 5 Z" fill="#7fcfea"/><circle cx="20" cy="22" r="6.2" fill="#9ad8ef" stroke="#1f3a48" stroke-width="3.4"/><path d="M26 9 H33 L29.5 2 Z" fill="#949ea6"/><rect x="28" y="9" width="4.5" height="9" fill="#949ea6"/></svg>
<svg style="position:absolute;left:1120px;top:964.4px;" width="40" height="40" viewBox="0 0 40 40"><path d="M20 22 H37 A17 17 0 1 1 20 5 Z" fill="#7fcfea"/><circle cx="20" cy="22" r="6.2" fill="#9ad8ef" stroke="#1f3a48" stroke-width="3.4"/><path d="M26 9 H33 L29.5 2 Z" fill="#949ea6"/><rect x="28" y="9" width="4.5" height="9" fill="#949ea6"/></svg>
<div style="position:absolute;left:1362px;top:773.4px;width:192px;height:46px;background:#c8ecea;"></div>
<div style="position:absolute;left:1554px;top:773.4px;width:480px;height:46px;background:#d0d0fb;"></div>
<div style="position:absolute;left:2034px;top:773.4px;width:208px;height:46px;background:#c8ecea;"></div>
<div style="position:absolute;left:1172px;top:641.6px;font:26.67px/26.67px 'Liberation Mono',monospace;white-space:pre;"><span style="color:#8c8c8c;font-style:italic;">        &lt;!-- redis <span style="display:inline-block;width:28px;text-align:center;font-style:normal;">缓</span><span style="display:inline-block;width:28px;text-align:center;font-style:normal;">存</span><span style="display:inline-block;width:28px;text-align:center;font-style:normal;">操</span><span style="display:inline-block;width:28px;text-align:center;font-style:normal;">作</span> --&gt;</span></div>
<div style="position:absolute;left:1172px;top:689.6px;font:26.67px/26.67px 'Liberation Mono',monospace;white-space:pre;"><span style="color:#000000;">        &lt;</span><span style="color:#0033b3;">dependency</span><span style="color:#000000;">&gt;</span></div>
<div style="position:absolute;left:1172px;top:737.6px;font:26.67px/26.67px 'Liberation Mono',monospace;white-space:pre;"><span style="color:#000000;">            &lt;</span><span style="color:#0033b3;">groupId</span><span style="color:#000000;">&gt;org.springframework.boot&lt;/</span><span style="color:#0033b3;">groupId</span><span style="color:#000000;">&gt;</span></div>
<div style="position:absolute;left:1172px;top:785.6px;font:26.67px/26.67px 'Liberation Mono',monospace;white-space:pre;"><span style="color:#000000;">            &lt;</span><span style="color:#0033b3;">artifactId</span><span style="color:#000000;">&gt;spring-boot-starter-data-redis&lt;/</span><span style="color:#0033b3;">artifactId</span><span style="color:#000000;">&gt;</span></div>
<div style="position:absolute;left:1172px;top:833.6px;font:26.67px/26.67px 'Liberation Mono',monospace;white-space:pre;"><span style="color:#000000;">        &lt;/</span><span style="color:#0033b3;">dependency</span><span style="color:#000000;">&gt;</span></div>
<div style="position:absolute;left:1172px;top:929.6px;font:26.67px/26.67px 'Liberation Mono',monospace;white-space:pre;"><span style="color:#8c8c8c;font-style:italic;">        &lt;!-- pool <span style="display:inline-block;width:28px;text-align:center;font-style:normal;">对</span><span style="display:inline-block;width:28px;text-align:center;font-style:normal;">象</span><span style="display:inline-block;width:28px;text-align:center;font-style:normal;">池</span> --&gt;</span></div>
<div style="position:absolute;left:1172px;top:977.6px;font:26.67px/26.67px 'Liberation Mono',monospace;white-space:pre;"><span style="color:#000000;">        &lt;</span><span style="color:#0033b3;">dependency</span><span style="color:#000000;">&gt;</span></div>
<div style="position:absolute;left:1172px;top:1025.6px;font:26.67px/26.67px 'Liberation Mono',monospace;white-space:pre;"><span style="color:#000000;">            &lt;</span><span style="color:#0033b3;">groupId</span><span style="color:#000000;">&gt;org.apache.commons&lt;/</span><span style="color:#0033b3;">groupId</span><span style="color:#000000;">&gt;</span></div>
<div style="position:absolute;left:1172px;top:1073.6px;font:26.67px/26.67px 'Liberation Mono',monospace;white-space:pre;"><span style="color:#000000;">            &lt;</span><span style="color:#0033b3;">artifactId</span><span style="color:#000000;">&gt;commons-pool2&lt;/</span><span style="color:#0033b3;">artifactId</span><span style="color:#000000;">&gt;</span></div>
<div style="position:absolute;left:1172px;top:1121.6px;font:26.67px/26.67px 'Liberation Mono',monospace;white-space:pre;"><span style="color:#000000;">        &lt;/</span><span style="color:#0033b3;">dependency</span><span style="color:#000000;">&gt;</span></div>
</div></div>
<div style="position:absolute;left:1069px;top:1148.5px;width:27px;height:27px;background:#fff;border:1.5px solid #b9b9b9;border-radius:5px;box-sizing:border-box;"></div>
<div style="position:absolute;left:1109.0px;top:1150.4px;font:normal normal 25px/25px 'Liberation Sans',sans-serif;color:#000;white-space:pre;letter-spacing:1.35px;">Open results in new tab</div>
<div style="position:absolute;left:1843.0px;top:1151.4px;font:normal normal 22px/22px 'Liberation Sans',sans-serif;color:#9a9a9a;white-space:pre;letter-spacing:0px;">⌘↩</div>
<div style="position:absolute;left:1917px;top:1139px;width:318px;height:46px;background:#fff;border:1.5px solid #c6c6c6;border-radius:6px;box-sizing:border-box;"></div>
<div style="position:absolute;left:1917px;width:318px;top:1149.3px;font:25px/25px 'Liberation Sans',sans-serif;color:#000;text-align:center;white-space:pre;letter-spacing:1.3px;">Open in Find Window</div>
<div style="position:absolute;left:1049px;top:72.5px;width:1206px;height:1130px;border:1px solid #c2c2c2;box-sizing:border-box;"></div>
<div style="position:absolute;left:1084px;top:159.5px;width:537px;height:59.5px;border:5px solid #e8412c;border-radius:11px;box-sizing:border-box;"></div>
<div style="position:absolute;left:1522px;top:1428px;width:300px;height:300px;background:#4c4c4c;border-radius:20px;"></div>
<svg style="position:absolute;left:1622px;top:1500px;" width="100" height="80" viewBox="0 0 100 80"><path d="M12 40 L38 62 L88 14" fill="none" stroke="#e6e6e6" stroke-width="7" stroke-linecap="butt" stroke-linejoin="miter"/></svg>
<div style="position:absolute;left:1522px;width:300px;top:1628px;font:28px/32px 'Liberation Sans',sans-serif;color:#fff;text-align:center;white-space:pre;">已添加到剪贴板</div>
</body></html>
